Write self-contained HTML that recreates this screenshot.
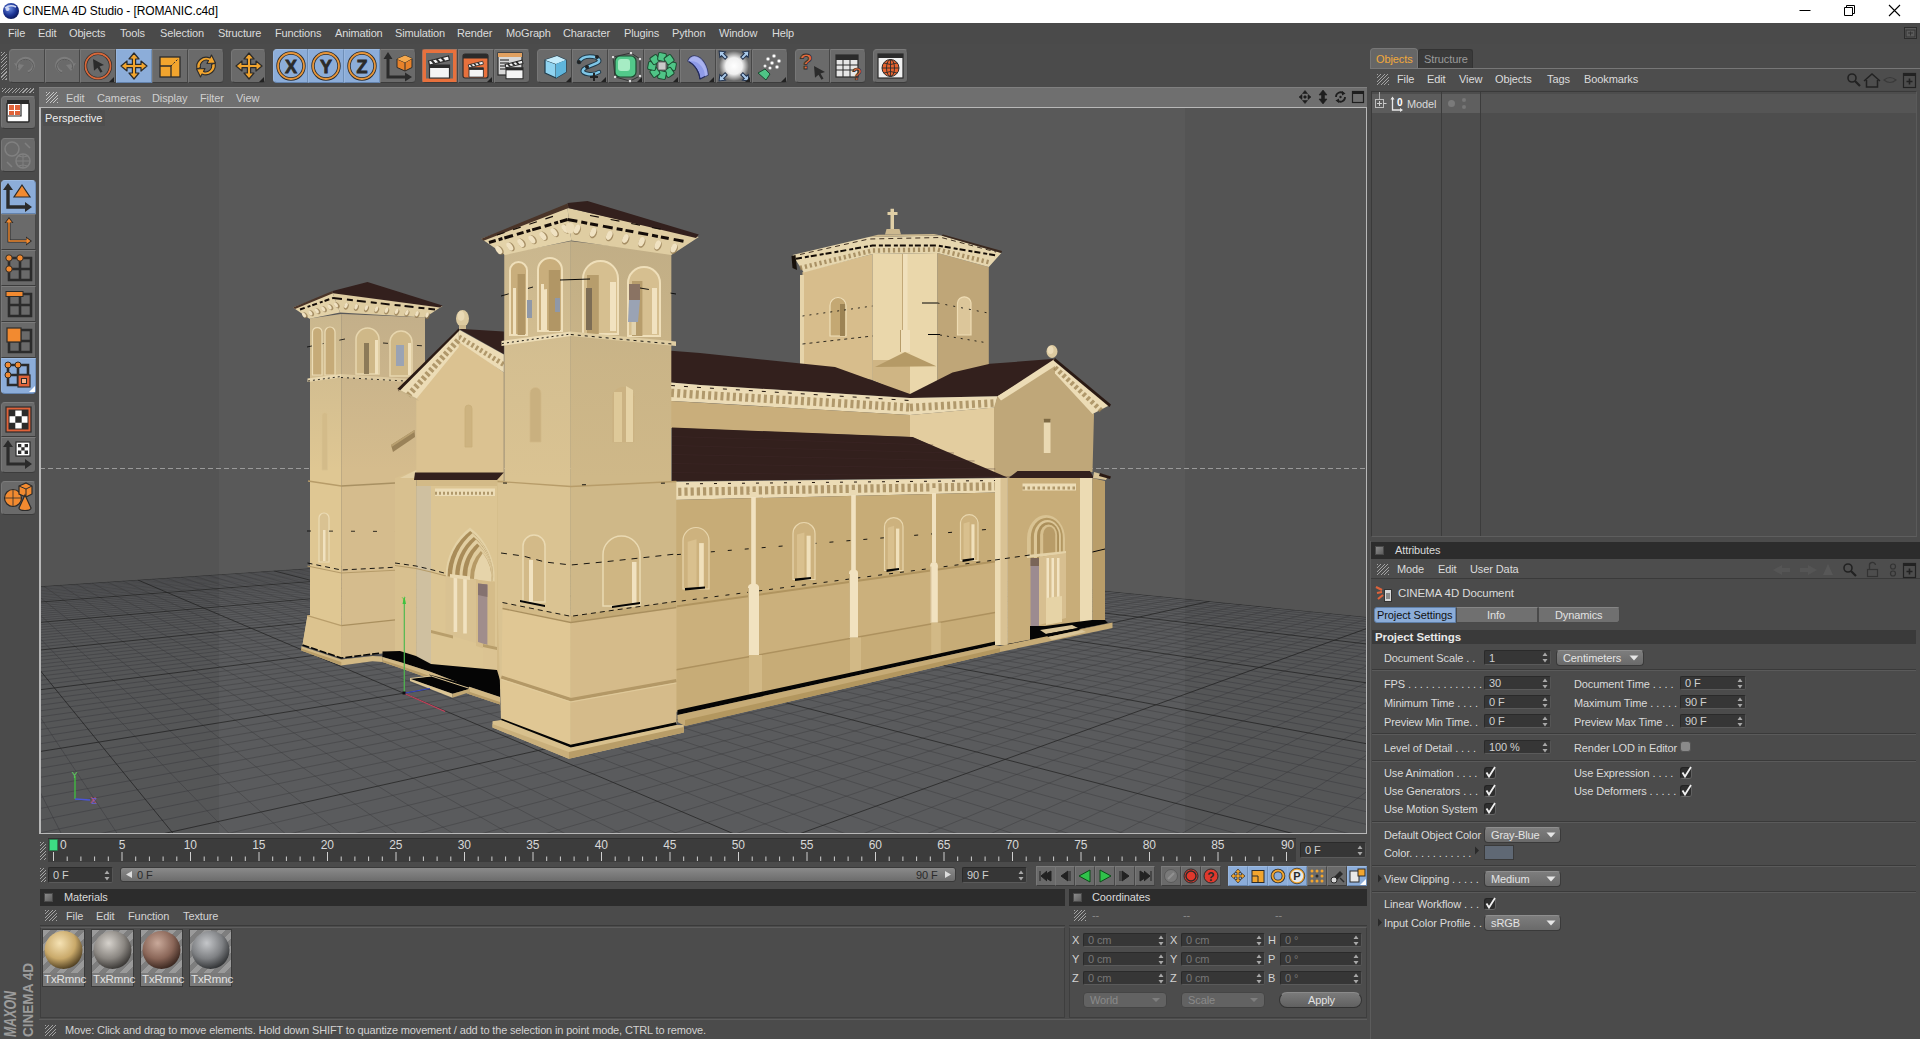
<!DOCTYPE html>
<html><head><meta charset="utf-8"><title>CINEMA 4D Studio - [ROMANIC.c4d]</title>
<style>
html,body{margin:0;padding:0;background:#4b4b4b;}
body{width:1920px;height:1039px;overflow:hidden;position:relative;font-family:"Liberation Sans",sans-serif;font-size:11px;color:#d2d2d2;}
div,span,svg{position:absolute;box-sizing:border-box;}
.t{white-space:nowrap;line-height:14px;font-size:11px;color:#d4d4d4;letter-spacing:-0.1px;}
.tm{white-space:nowrap;line-height:14px;font-size:11px;color:#dcdcdc;letter-spacing:-0.15px;}
.dk{color:#1c1c1c;}
.btn{background:#6a6a6a;border-top:1px solid #7c7c7c;border-left:1px solid #777;border-bottom:1px solid #3c3c3c;border-right:1px solid #474747;}
.btn.on{background:#8cadd9;border-color:#9dbbe2 #6f8fb8 #6483ad #98b6de;}
.fld{background:#363636;border:1px solid #2a2a2a;border-bottom-color:#5a5a5a;border-right-color:#555;border-radius:2px;}
.dd{background:linear-gradient(#7d7d7d,#6a6a6a);border:1px solid #3a3a3a;border-top-color:#8e8e8e;border-radius:4px;}
.hdr{background:#2c2c2c;}
.sep{background:#3a3a3a;border-bottom:1px solid #5a5a5a;height:2px;}
.grip{background-image:repeating-linear-gradient(135deg,#a4a4a4 0 0.9px,transparent 0.9px 2.5px);}
.chk{width:11px;height:11px;background:#2e2e2e;border:1px solid #242424;border-bottom-color:#666;border-right-color:#606060;border-radius:3px;}
</style></head>
<body>
<div style="left:1367px;top:44px;width:553px;height:995px;background:#4b4b4b;"></div>
<div style="left:1370px;top:48px;width:48px;height:21px;background:#666;border:1px solid #777;border-bottom:none;border-radius:4px 4px 0 0;"></div>
<span class="t" style="left:1376px;top:52px;color:#f2a93b;">Objects</span>
<div style="left:1418px;top:49px;width:55px;height:19px;background:#3a3a3a;border:1px solid #333;border-bottom:none;border-radius:3px 3px 0 0;"></div>
<span class="t" style="left:1424px;top:52px;color:#9a9a9a;">Structure</span>
<div style="left:1370px;top:68px;width:550px;height:1px;background:#777;"></div>
<div style="left:1370px;top:69px;width:550px;height:21px;background:#4d4d4d;"></div>
<div class="grip" style="left:1377px;top:74px;width:12px;height:11px;"></div>
<span class="t" style="left:1397px;top:72px;color:#dcdcdc;">File</span>
<span class="t" style="left:1427px;top:72px;color:#dcdcdc;">Edit</span>
<span class="t" style="left:1459px;top:72px;color:#dcdcdc;">View</span>
<span class="t" style="left:1495px;top:72px;color:#dcdcdc;">Objects</span>
<span class="t" style="left:1547px;top:72px;color:#dcdcdc;">Tags</span>
<span class="t" style="left:1584px;top:72px;color:#dcdcdc;">Bookmarks</span>
<svg style="left:1845px;top:71px" width="74" height="18" viewBox="0 0 74 18"><circle cx="7" cy="7" r="4" fill="none" stroke="#222" stroke-width="1.600"/><path d="M10 10l5 5" stroke="#222" stroke-width="2.200"/><path d="M19 10l8-7 8 7M21.500 9v7h11v-7" fill="none" stroke="#222" stroke-width="1.500"/><path d="M39 9q6-5 12 0q-6 5-12 0z" fill="none" stroke="#3a3a3a" stroke-width="1.200"/><rect x="58.500" y="2.500" width="12" height="14" fill="none" stroke="#222" stroke-width="1.200"/><path d="M58 4h13" stroke="#222" stroke-width="2"/><path d="M61.500 10.500h6M64.500 7.500v6" stroke="#222" stroke-width="1.600"/></svg>
<div style="left:1371px;top:91px;width:546px;height:446px;background:#4d4d4d;border:1px solid #3a3a3a;border-bottom-color:#5e5e5e;border-right-color:#5a5a5a;"></div>
<div style="left:1372px;top:94px;width:544px;height:19px;background:#555;"></div>
<div style="left:1372px;top:94px;width:70px;height:19px;background:#5c5c5c;"></div>
<div style="left:1442px;top:94px;width:39px;height:19px;background:#5f5f5f;"></div>
<div style="left:1441px;top:92px;width:1px;height:444px;background:#3c3c3c;"></div>
<div style="left:1480px;top:92px;width:1px;height:444px;background:#3c3c3c;"></div>
<svg style="left:1373px;top:92px" width="40" height="22" viewBox="0 0 40 22"><path d="M6.500 0v8" stroke="#aaa"/><rect x="2.500" y="7.500" width="8" height="8" fill="none" stroke="#bdbdbd"/><path d="M4 11.500h5M6.500 9v5M10.500 11.500h3" stroke="#cfcfcf"/><path d="M19.500 6v12h9" fill="none" stroke="#e8e8e8" stroke-width="1.300"/><path d="M19.500 4.500l-2 3h4zM30 18l-3-2v4z" fill="#e8e8e8"/></svg>
<span class="t" style="left:1397px;top:96px;color:#fff;font-size:10px;font-weight:bold;">0</span>
<span class="t" style="left:1407px;top:97px;color:#dadada;">Model</span>
<div style="left:1448px;top:100px;width:7px;height:7px;background:#7a7a7a;border-radius:50%;"></div>
<div style="left:1462px;top:98px;width:4px;height:4px;background:#777;border-radius:50%;"></div>
<div style="left:1462px;top:105px;width:4px;height:4px;background:#777;border-radius:50%;"></div>
<div style="left:1370px;top:541px;width:1px;height:498px;background:#5c5c5c;"></div>
<div class="hdr" style="left:1371px;top:542px;width:549px;height:17px;"></div>
<div style="left:1375px;top:546px;width:9px;height:9px;background:linear-gradient(135deg,#8a8a8a,#5e5e5e);border:1px solid #4a4a4a;"></div>
<span class="t" style="left:1395px;top:543px;color:#dadada;">Attributes</span>
<div style="left:1371px;top:559px;width:549px;height:20px;background:#4d4d4d;border-bottom:1px solid #3a3a3a;"></div>
<div class="grip" style="left:1377px;top:564px;width:12px;height:11px;"></div>
<span class="t" style="left:1397px;top:562px;color:#dcdcdc;">Mode</span>
<span class="t" style="left:1438px;top:562px;color:#dcdcdc;">Edit</span>
<span class="t" style="left:1470px;top:562px;color:#dcdcdc;">User Data</span>
<svg style="left:1770px;top:561px" width="150" height="18" viewBox="0 0 150 18"><path d="M3 9l9-5v3h8v4h-8v3zM47 9l-9-5v3h-8v4h8v3z" fill="#555"/><path d="M58 3l5 11h-10z" fill="#575757"/><circle cx="78" cy="7" r="4" fill="none" stroke="#222" stroke-width="1.600"/><path d="M81 10l5 5" stroke="#222" stroke-width="2.200"/><rect x="97.500" y="8.500" width="10" height="7" fill="none" stroke="#333" stroke-width="1.200"/><path d="M99.500 8v-3a3 3 0 0 1 6-1" fill="none" stroke="#333" stroke-width="1.300"/><circle cx="123" cy="5.500" r="2.500" fill="none" stroke="#333" stroke-width="1.200"/><circle cx="123" cy="12.500" r="2.500" fill="none" stroke="#333" stroke-width="1.200"/><rect x="133.500" y="2.500" width="12" height="14" fill="none" stroke="#222" stroke-width="1.200"/><path d="M133 4h13" stroke="#222" stroke-width="2"/><path d="M136.500 10.500h6M139.500 7.500v6" stroke="#222" stroke-width="1.600"/></svg>
<svg style="left:1374px;top:584px" width="20" height="20" viewBox="0 0 20 20"><path d="M2 3l6 3M3 9l5-1M4 15l5-4" stroke="#e0633a" stroke-width="2.200"/><rect x="10.500" y="5.500" width="7" height="12" fill="#d8d8d8" stroke="#333"/><rect x="12" y="9" width="4" height="6" fill="#8a8a8a"/></svg>
<span class="t" style="left:1398px;top:586px;color:#dcdcdc;font-size:11.5px;">CINEMA 4D Document</span>
<div style="left:1374px;top:607px;width:82px;height:16px;background:#8cadd9;border:1px solid #5f7fa8;border-radius:3px 0 0 3px;"></div>
<span class="t" style="left:1377px;top:608px;color:#111;">Project Settings</span>
<div style="left:1456px;top:607px;width:82px;height:16px;background:#707070;border:1px solid #4a4a4a;border-top-color:#858585;"></div>
<span class="t" style="left:1487px;top:608px;color:#e2e2e2;">Info</span>
<div style="left:1538px;top:607px;width:82px;height:16px;background:#707070;border:1px solid #4a4a4a;border-top-color:#858585;border-radius:0 3px 3px 0;"></div>
<span class="t" style="left:1555px;top:608px;color:#e2e2e2;">Dynamics</span>
<div style="left:1372px;top:630px;width:544px;height:14px;background:#3a3a3a;"></div>
<span class="t" style="left:1375px;top:630px;color:#e8e8e8;font-weight:bold;font-size:11.5px;">Project Settings</span>
<span class="t" style="left:1384px;top:650.5px;color:#dadada;">Document Scale . .</span>
<div class="fld" style="left:1484px;top:650px;width:67px;height:15px;"></div><span class="t" style="left:1489px;top:650.5px;color:#d0d0d0;">1</span><svg style="left:1542px;top:652.0px" width="6" height="11" viewBox="0 0 6 11"><path d="M3 0.500l2.500 3.500h-5zM3 10.500l2.500-3.500h-5z" fill="#a8a8a8"/></svg>
<div class="dd" style="left:1556px;top:649.5px;width:88px;height:16px;"></div><span class="t" style="left:1563px;top:650.5px;color:#e4e4e4;">Centimeters</span><svg style="left:1629px;top:654.5px" width="10" height="6"><path d="M0.500 0.500h9l-4.500 5z" fill="#e6e6e6"/></svg>
<div class="sep" style="left:1372px;top:669px;width:544px;height:2px;"></div>
<span class="t" style="left:1384px;top:676.5px;color:#dadada;">FPS . . . . . . . . . . . . .</span>
<div class="fld" style="left:1484px;top:676px;width:67px;height:14px;"></div><span class="t" style="left:1489px;top:676.0px;color:#d0d0d0;">30</span><svg style="left:1542px;top:677.5px" width="6" height="11" viewBox="0 0 6 11"><path d="M3 0.500l2.500 3.500h-5zM3 10.500l2.500-3.500h-5z" fill="#a8a8a8"/></svg>
<span class="t" style="left:1574px;top:676.5px;color:#dadada;">Document Time . . . .</span>
<div class="fld" style="left:1680px;top:676px;width:66px;height:14px;"></div><span class="t" style="left:1685px;top:676.0px;color:#d0d0d0;">0 F</span><svg style="left:1737px;top:677.5px" width="6" height="11" viewBox="0 0 6 11"><path d="M3 0.500l2.500 3.500h-5zM3 10.500l2.500-3.500h-5z" fill="#a8a8a8"/></svg>
<span class="t" style="left:1384px;top:695.5px;color:#dadada;">Minimum Time  . . . .</span>
<div class="fld" style="left:1484px;top:695px;width:67px;height:14px;"></div><span class="t" style="left:1489px;top:695.0px;color:#d0d0d0;">0 F</span><svg style="left:1542px;top:696.5px" width="6" height="11" viewBox="0 0 6 11"><path d="M3 0.500l2.500 3.500h-5zM3 10.500l2.500-3.500h-5z" fill="#a8a8a8"/></svg>
<span class="t" style="left:1574px;top:695.5px;color:#dadada;">Maximum Time . . . . .</span>
<div class="fld" style="left:1680px;top:695px;width:66px;height:14px;"></div><span class="t" style="left:1685px;top:695.0px;color:#d0d0d0;">90 F</span><svg style="left:1737px;top:696.5px" width="6" height="11" viewBox="0 0 6 11"><path d="M3 0.500l2.500 3.500h-5zM3 10.500l2.500-3.500h-5z" fill="#a8a8a8"/></svg>
<span class="t" style="left:1384px;top:714.5px;color:#dadada;">Preview Min Time. .</span>
<div class="fld" style="left:1484px;top:714px;width:67px;height:14px;"></div><span class="t" style="left:1489px;top:714.0px;color:#d0d0d0;">0 F</span><svg style="left:1542px;top:715.5px" width="6" height="11" viewBox="0 0 6 11"><path d="M3 0.500l2.500 3.500h-5zM3 10.500l2.500-3.500h-5z" fill="#a8a8a8"/></svg>
<span class="t" style="left:1574px;top:714.5px;color:#dadada;">Preview Max Time . .</span>
<div class="fld" style="left:1680px;top:714px;width:66px;height:14px;"></div><span class="t" style="left:1685px;top:714.0px;color:#d0d0d0;">90 F</span><svg style="left:1737px;top:715.5px" width="6" height="11" viewBox="0 0 6 11"><path d="M3 0.500l2.500 3.500h-5zM3 10.500l2.500-3.500h-5z" fill="#a8a8a8"/></svg>
<div class="sep" style="left:1372px;top:732.5px;width:544px;height:2px;"></div>
<span class="t" style="left:1384px;top:740.5px;color:#dadada;">Level of Detail  . . . .</span>
<div class="fld" style="left:1484px;top:740px;width:67px;height:14px;"></div><span class="t" style="left:1489px;top:740.0px;color:#d0d0d0;">100 %</span><svg style="left:1542px;top:741.5px" width="6" height="11" viewBox="0 0 6 11"><path d="M3 0.500l2.500 3.500h-5zM3 10.500l2.500-3.500h-5z" fill="#a8a8a8"/></svg>
<span class="t" style="left:1574px;top:740.5px;color:#dadada;">Render LOD in Editor</span>
<div style="left:1680px;top:741px;width:11px;height:11px;background:#8a8a8a;border:1px solid #555;border-radius:3px;"></div>
<div class="sep" style="left:1372px;top:759.5px;width:544px;height:2px;"></div>
<span class="t" style="left:1384px;top:766px;color:#dadada;">Use Animation  . . . .</span>
<div class="chk" style="left:1484px;top:767px;width:12px;height:12px;"></div><svg style="left:1484px;top:765px" width="14" height="14" viewBox="0 0 14 14"><path d="M2.500 7.500l2.500 4 6-9.500" fill="none" stroke="#f0f0f0" stroke-width="1.800"/></svg>
<span class="t" style="left:1574px;top:766px;color:#dadada;">Use Expression  . . . .</span>
<div class="chk" style="left:1680px;top:767px;width:12px;height:12px;"></div><svg style="left:1680px;top:765px" width="14" height="14" viewBox="0 0 14 14"><path d="M2.500 7.500l2.500 4 6-9.500" fill="none" stroke="#f0f0f0" stroke-width="1.800"/></svg>
<span class="t" style="left:1384px;top:784px;color:#dadada;">Use Generators  . . .</span>
<div class="chk" style="left:1484px;top:785px;width:12px;height:12px;"></div><svg style="left:1484px;top:783px" width="14" height="14" viewBox="0 0 14 14"><path d="M2.500 7.500l2.500 4 6-9.500" fill="none" stroke="#f0f0f0" stroke-width="1.800"/></svg>
<span class="t" style="left:1574px;top:784px;color:#dadada;">Use Deformers . . . . .</span>
<div class="chk" style="left:1680px;top:785px;width:12px;height:12px;"></div><svg style="left:1680px;top:783px" width="14" height="14" viewBox="0 0 14 14"><path d="M2.500 7.500l2.500 4 6-9.500" fill="none" stroke="#f0f0f0" stroke-width="1.800"/></svg>
<span class="t" style="left:1384px;top:802px;color:#dadada;">Use Motion System</span>
<div class="chk" style="left:1484px;top:803px;width:12px;height:12px;"></div><svg style="left:1484px;top:801px" width="14" height="14" viewBox="0 0 14 14"><path d="M2.500 7.500l2.500 4 6-9.500" fill="none" stroke="#f0f0f0" stroke-width="1.800"/></svg>
<div class="sep" style="left:1372px;top:820.5px;width:544px;height:2px;"></div>
<span class="t" style="left:1384px;top:827.5px;color:#dadada;">Default Object Color</span>
<div class="dd" style="left:1484px;top:826.5px;width:77px;height:16px;"></div><span class="t" style="left:1491px;top:827.5px;color:#e4e4e4;">Gray-Blue</span><svg style="left:1546px;top:831.5px" width="10" height="6"><path d="M0.500 0.500h9l-4.500 5z" fill="#e6e6e6"/></svg>
<span class="t" style="left:1384px;top:846px;color:#dadada;">Color. . . . . . . . . . .</span>
<svg style="left:1474px;top:846px" width="6" height="9"><path d="M1 0.500l4 4-4 4z" fill="#2a2a2a"/></svg>
<div style="left:1484px;top:845px;width:30px;height:15px;background:#5f6874;border:1px solid #3a3a3a;"></div>
<div class="sep" style="left:1372px;top:864.5px;width:544px;height:2px;"></div>
<svg style="left:1377px;top:874px" width="6" height="9"><path d="M1 0.500l4 4-4 4z" fill="#2a2a2a"/></svg>
<span class="t" style="left:1384px;top:872px;color:#dadada;">View Clipping . . . . .</span>
<div class="dd" style="left:1484px;top:870.5px;width:77px;height:16px;"></div><span class="t" style="left:1491px;top:871.5px;color:#e4e4e4;">Medium</span><svg style="left:1546px;top:875.5px" width="10" height="6"><path d="M0.500 0.500h9l-4.500 5z" fill="#e6e6e6"/></svg>
<div class="sep" style="left:1372px;top:890.5px;width:544px;height:2px;"></div>
<span class="t" style="left:1384px;top:897px;color:#dadada;">Linear Workflow . . .</span>
<div class="chk" style="left:1484px;top:897.5px;width:12px;height:12px;"></div><svg style="left:1484px;top:895.5px" width="14" height="14" viewBox="0 0 14 14"><path d="M2.500 7.500l2.500 4 6-9.500" fill="none" stroke="#f0f0f0" stroke-width="1.800"/></svg>
<svg style="left:1377px;top:918px" width="6" height="9"><path d="M1 0.500l4 4-4 4z" fill="#2a2a2a"/></svg>
<span class="t" style="left:1384px;top:916px;color:#dadada;">Input Color Profile . .</span>
<div class="dd" style="left:1484px;top:914.5px;width:77px;height:16px;"></div><span class="t" style="left:1491px;top:915.5px;color:#e4e4e4;">sRGB</span><svg style="left:1546px;top:919.5px" width="10" height="6"><path d="M0.500 0.500h9l-4.500 5z" fill="#e6e6e6"/></svg>
<div style="left:0px;top:0px;width:1920px;height:23px;background:#ffffff;"></div>
<svg style="left:2px;top:2px" width="18" height="18" viewBox="0 0 18 18"><defs><radialGradient id="gi" cx="0.4" cy="0.35" r="0.7"><stop offset="0" stop-color="#6f8fe0"/><stop offset="0.6" stop-color="#1d3596"/><stop offset="1" stop-color="#0a1450"/></radialGradient></defs>
    <circle cx="9" cy="9" r="8" fill="url(#gi)"/><path d="M3 6 Q8 2 14 5" stroke="#cfd8f5" stroke-width="1.6" fill="none"/><circle cx="5.5" cy="7" r="2" fill="#e8ecfa" opacity=".8"/></svg>
<span class="t" style="left:23px;top:4px;color:#000;font-size:12px;letter-spacing:-0.12px;">CINEMA 4D Studio - [ROMANIC.c4d]</span>
<svg style="left:1795px;top:2px" width="120" height="18" viewBox="0 0 120 18"><path d="M4.5 8.5H15.5" stroke="#000" stroke-width="1"/>
      <path d="M49.5 5.5h8v8h-8z M51.5 5.5v-2h8v8h-2" stroke="#000" fill="none" stroke-width="1"/>
      <path d="M94 3 L105 14 M105 3 L94 14" stroke="#000" stroke-width="1.1"/></svg>
<div style="left:0px;top:23px;width:1920px;height:21px;background:#4a4a4a;"></div>
<span class="tm" style="left:8px;top:26px;">File</span>
<span class="tm" style="left:38px;top:26px;">Edit</span>
<span class="tm" style="left:69px;top:26px;">Objects</span>
<span class="tm" style="left:120px;top:26px;">Tools</span>
<span class="tm" style="left:160px;top:26px;">Selection</span>
<span class="tm" style="left:218px;top:26px;">Structure</span>
<span class="tm" style="left:275px;top:26px;">Functions</span>
<span class="tm" style="left:335px;top:26px;">Animation</span>
<span class="tm" style="left:395px;top:26px;">Simulation</span>
<span class="tm" style="left:457px;top:26px;">Render</span>
<span class="tm" style="left:506px;top:26px;">MoGraph</span>
<span class="tm" style="left:563px;top:26px;">Character</span>
<span class="tm" style="left:624px;top:26px;">Plugins</span>
<span class="tm" style="left:672px;top:26px;">Python</span>
<span class="tm" style="left:719px;top:26px;">Window</span>
<span class="tm" style="left:772px;top:26px;">Help</span>
<svg style="left:1904px;top:27px" width="13" height="12" viewBox="0 0 13 12"><rect x="0.5" y="0.5" width="12" height="11" fill="#5a5a5a" stroke="#2c2c2c"/><rect x="2" y="3" width="9" height="7" fill="none" stroke="#333"/><path d="M4 6h5M6.5 4.5v4" stroke="#333"/></svg>
<div style="left:0px;top:44px;width:1366px;height:44px;background:#4b4b4b;"></div>
<div class="grip" style="left:1px;top:52px;width:6px;height:28px;"></div>
<div class="btn" style="left:9px;top:49px;width:35.5px;height:34px;border-radius:4px 0 0 4px;"></div>
<svg style="left:9px;top:49px" width="36" height="34" viewBox="0 0 36 34"><path d="M9 19a8 7 0 1 1 10 4" stroke="#7d7d7d" stroke-width="3" fill="none"/><path d="M5 14l5 8 5-6z" fill="#7d7d7d"/><path d="M9 20a8 7 0 1 1 10 4" stroke="#5b5b5b" stroke-width="1" fill="none"/></svg>
<div class="btn" style="left:44.5px;top:49px;width:35.5px;height:34px;"></div>
<svg style="left:44.5px;top:49px" width="36" height="34" viewBox="0 0 36 34"><path d="M27 19a8 7 0 1 0 -10 4" stroke="#7d7d7d" stroke-width="3" fill="none"/><path d="M31 14l-5 8 -5-6z" fill="#7d7d7d"/><path d="M27 20a8 7 0 1 0 -10 4" stroke="#5b5b5b" stroke-width="1" fill="none"/></svg>
<div class="btn" style="left:80.0px;top:49px;width:36px;height:34px;"></div>
<svg style="left:80.0px;top:49px" width="36" height="34" viewBox="0 0 36 34"><circle cx="18" cy="17" r="12.5" fill="none" stroke="#2b2b2b" stroke-width="3.2"/><circle cx="18" cy="17" r="12.5" fill="none" stroke="#d8683a" stroke-width="1.8"/><path d="M13 10l11 6-4.5 1.5 3 5-2 1.2-3-5-3.5 3z" fill="#2b2b2b"/><path d="M29 33h5v-5z" fill="#222"/></svg>
<div class="btn on" style="left:116.0px;top:49px;width:35.5px;height:34px;"></div>
<svg style="left:116.0px;top:49px" width="36" height="34" viewBox="0 0 36 34"><path d="M18 4l5 6h-3.4v5.4h5.4v-3.4l6 5-6 5v-3.4h-5.4v5.4h3.4l-5 6-5-6h3.400v-5.4h-5.400v3.4l-6-5 6-5v3.4h5.400v-5.400h-3.400z" fill="#f2a52e" stroke="#2b2b2b" stroke-width="1.2" stroke-linejoin="round"/></svg>
<div class="btn" style="left:151.5px;top:49px;width:36px;height:34px;"></div>
<svg style="left:151.5px;top:49px" width="36" height="34" viewBox="0 0 36 34"><rect x="8" y="8" width="20" height="20" fill="#f2a52e" stroke="#2b2b2b" stroke-width="1.3"/><path d="M8 17h11v11" fill="none" stroke="#2b2b2b" stroke-width="1.3"/><path d="M19 17l7-7" stroke="#2b2b2b" stroke-width="1" stroke-dasharray="2 1.5"/></svg>
<div class="btn" style="left:187.5px;top:49px;width:36px;height:34px;border-radius:0 4px 4px 0;"></div>
<svg style="left:187.5px;top:49px" width="36" height="34" viewBox="0 0 36 34"><path d="M9 20a9.500 9.500 0 0 1 13-11l1.500-3 4 8-8.500 0.500 1.500-3a6 6 0 0 0 -8 7z" fill="#f2a52e" stroke="#2b2b2b" stroke-width="1.1" stroke-linejoin="round"/><path d="M27 14a9.500 9.500 0 0 1 -13 11l-1.500 3-4-8 8.500-0.500-1.500 3a6 6 0 0 0 8-7z" fill="#f2a52e" stroke="#2b2b2b" stroke-width="1.1" stroke-linejoin="round"/></svg>
<div class="btn" style="left:231px;top:49px;width:35px;height:34px;border-radius:4px;"></div>
<svg style="left:231px;top:49px" width="36" height="34" viewBox="0 0 36 34"><path d="M18 4l5 6h-3.4v5.4h5.4v-3.4l6 5-6 5v-3.4h-5.4v5.4h3.4l-5 6-5-6h3.400v-5.4h-5.400v3.4l-6-5 6-5v3.4h5.400v-5.400h-3.400z" fill="#f2a52e" stroke="#2b2b2b" stroke-width="1.2" stroke-linejoin="round"/><path d="M28 33h5v-5z" fill="#222"/></svg>
<div class="btn on" style="left:273px;top:49px;width:35px;height:34px;border-radius:4px 0 0 4px;"></div>
<svg style="left:273px;top:49px" width="36" height="34" viewBox="0 0 36 34"><circle cx="18" cy="17" r="13" fill="none" stroke="#2b2b2b" stroke-width="3.4"/><circle cx="18" cy="17" r="13" fill="none" stroke="#e8963a" stroke-width="1.8"/><text x="18" y="23.500" text-anchor="middle" font-family="Liberation Sans,sans-serif" font-weight="bold" font-size="18" fill="#2b2b2b" stroke="#2b2b2b" stroke-width="0.8">X</text></svg>
<div class="btn on" style="left:308px;top:49px;width:35.5px;height:34px;"></div>
<svg style="left:308px;top:49px" width="36" height="34" viewBox="0 0 36 34"><circle cx="18" cy="17" r="13" fill="none" stroke="#2b2b2b" stroke-width="3.4"/><circle cx="18" cy="17" r="13" fill="none" stroke="#e8963a" stroke-width="1.8"/><text x="18" y="23.500" text-anchor="middle" font-family="Liberation Sans,sans-serif" font-weight="bold" font-size="18" fill="#2b2b2b" stroke="#2b2b2b" stroke-width="0.8">Y</text></svg>
<div class="btn on" style="left:343.5px;top:49px;width:36px;height:34px;"></div>
<svg style="left:343.5px;top:49px" width="36" height="34" viewBox="0 0 36 34"><circle cx="18" cy="17" r="13" fill="none" stroke="#2b2b2b" stroke-width="3.4"/><circle cx="18" cy="17" r="13" fill="none" stroke="#e8963a" stroke-width="1.8"/><text x="18" y="23.500" text-anchor="middle" font-family="Liberation Sans,sans-serif" font-weight="bold" font-size="18" fill="#2b2b2b" stroke="#2b2b2b" stroke-width="0.8">Z</text></svg>
<div class="btn" style="left:379.5px;top:49px;width:36px;height:34px;border-radius:0 4px 4px 0;"></div>
<svg style="left:379.5px;top:49px" width="36" height="34" viewBox="0 0 36 34"><path d="M8 7v21h20" fill="none" stroke="#2b2b2b" stroke-width="3"/><path d="M8 3l-4.500 7h9z M32 28l-7-4.500v9z" fill="#2b2b2b"/><path d="M17 10l8-3.500 7 3v9l-7 3.500-8-3.500z" fill="#e8822a" stroke="#2b2b2b" stroke-width="1"/><path d="M17 10l8 3.500 7-4M25 13.500v8.500" fill="none" stroke="#2b2b2b" stroke-width="1"/><path d="M17 10l8-3.500 7 3-7 4z" fill="#f6a94e"/></svg>
<div class="btn" style="left:422px;top:49px;width:36px;height:34px;border-radius:4px 0 0 4px;"></div>
<svg style="left:422px;top:49px" width="36" height="34" viewBox="0 0 36 34"><rect x="0.5" y="0.5" width="34" height="32.5" fill="#e8713d"/><rect x="4" y="4" width="27" height="25.5" fill="#6a6a6a"/><g transform="translate(7.5 8) scale(1.0)"><path d="M0 8h20v13h-20z" fill="#f4f4f4" stroke="#2b2b2b" stroke-width="1.200"/><path d="M-1 4l20-5 1 4-20 5z" fill="#f4f4f4" stroke="#2b2b2b" stroke-width="1.200"/><path d="M2 3.300l3 3.200M7 2l3 3.200M12 .8l3 3.200" stroke="#2b2b2b" stroke-width="2"/><path d="M0 8h20v3h-20z" fill="#2b2b2b"/></g></svg>
<div class="btn" style="left:458px;top:49px;width:36px;height:34px;"></div>
<svg style="left:458px;top:49px" width="36" height="34" viewBox="0 0 36 34"><rect x="5" y="5" width="25" height="24" rx="2" fill="#e8713d" stroke="#2b2b2b" stroke-width="1.2"/><path d="M5 7a2 2 0 0 1 2-2h21a2 2 0 0 1 2 2v2.500h-25z" fill="#2b2b2b"/><g transform="translate(11 13) scale(0.72)"><path d="M0 8h20v13h-20z" fill="#f4f4f4" stroke="#2b2b2b" stroke-width="1.200"/><path d="M-1 4l20-5 1 4-20 5z" fill="#f4f4f4" stroke="#2b2b2b" stroke-width="1.200"/><path d="M2 3.300l3 3.200M7 2l3 3.200M12 .8l3 3.200" stroke="#2b2b2b" stroke-width="2"/><path d="M0 8h20v3h-20z" fill="#2b2b2b"/></g><path d="M29 33h5v-5z" fill="#222"/></svg>
<div class="btn" style="left:494px;top:49px;width:35.5px;height:34px;border-radius:0 4px 4px 0;"></div>
<svg style="left:494px;top:49px" width="36" height="34" viewBox="0 0 36 34"><rect x="4" y="4" width="24" height="22" fill="#d8d8d8" stroke="#2b2b2b" stroke-width="1.2"/><rect x="4" y="4" width="24" height="4" fill="#e0a060"/><path d="M6 11h9M6 14h9M6 17h9M6 20h9" stroke="#555" stroke-width="1.400"/><g transform="translate(12 12) scale(0.85)"><path d="M0 8h20v13h-20z" fill="#f4f4f4" stroke="#2b2b2b" stroke-width="1.200"/><path d="M-1 4l20-5 1 4-20 5z" fill="#f4f4f4" stroke="#2b2b2b" stroke-width="1.200"/><path d="M2 3.300l3 3.200M7 2l3 3.200M12 .8l3 3.200" stroke="#2b2b2b" stroke-width="2"/><path d="M0 8h20v3h-20z" fill="#2b2b2b"/></g></svg>
<div class="btn" style="left:537px;top:49px;width:34.5px;height:34px;border-radius:4px 0 0 4px;"></div>
<svg style="left:537px;top:49px" width="36" height="34" viewBox="0 0 36 34"><path d="M8 11l12-4 9 4v12l-10 6-11-5z" fill="#8fd3f0" stroke="#1f3a4a" stroke-width="1.2" stroke-linejoin="round"/><path d="M8 11l11 4 10-4M19 15v14" fill="none" stroke="#1f3a4a" stroke-width="1"/><path d="M8 11l12-4 9 4-10 4z" fill="#c4ecfb"/><path d="M19 15l10-4v12l-10 6z" fill="#5fb5dc"/><path d="M29 33h5v-5z" fill="#222"/></svg>
<div class="btn" style="left:571.5px;top:49px;width:36px;height:34px;"></div>
<svg style="left:571.5px;top:49px" width="36" height="34" viewBox="0 0 36 34"><path d="M7 13c4-8 18-6 20-2s-14 6-16 10 10 6 16 2" fill="none" stroke="#1f3a4a" stroke-width="4.500" stroke-linecap="round"/><path d="M7 13c4-8 18-6 20-2s-14 6-16 10 10 6 16 2" fill="none" stroke="#7fc6e6" stroke-width="2.500" stroke-linecap="round"/><circle cx="7" cy="13" r="2" fill="#222"/><circle cx="25" cy="8" r="2" fill="#222"/><circle cx="15" cy="18" r="2" fill="#222"/><path d="M18 28h8M22 24v8" stroke="#222" stroke-width="2"/><path d="M29 33h5v-5z" fill="#222"/></svg>
<div class="btn" style="left:607.5px;top:49px;width:36px;height:34px;"></div>
<svg style="left:607.5px;top:49px" width="36" height="34" viewBox="0 0 36 34"><rect x="7" y="7" width="21" height="21" rx="5" fill="#52c98a" stroke="#1c4a30" stroke-width="1.2"/><rect x="10" y="10" width="12" height="12" rx="3" fill="#a6ecc4"/><path d="M5 8l18-4 9 6v17l-10 5-15-4z" fill="none" stroke="#333" stroke-width="1"/><g fill="#fff" stroke="#333" stroke-width=".5"><circle cx="5" cy="8" r="1.500"/><circle cx="23" cy="4" r="1.500"/><circle cx="32" cy="10" r="1.500"/><circle cx="32" cy="27" r="1.500"/><circle cx="22" cy="32" r="1.500"/><circle cx="7" cy="28" r="1.500"/></g><path d="M29 33h5v-5z" fill="#222"/></svg>
<div class="btn" style="left:643.5px;top:49px;width:36px;height:34px;"></div>
<svg style="left:643.5px;top:49px" width="36" height="34" viewBox="0 0 36 34"><rect x="24.0" y="13.0" width="8" height="8" rx="1.5" fill="#4fc486" stroke="#1c4a30" stroke-width="1" transform="rotate(10 28.0 17.0)"/><rect x="21.1" y="19.4" width="8" height="8" rx="1.5" fill="#4fc486" stroke="#1c4a30" stroke-width="1" transform="rotate(55 25.1 23.4)"/><rect x="14.0" y="22.0" width="8" height="8" rx="1.5" fill="#4fc486" stroke="#1c4a30" stroke-width="1" transform="rotate(100 18.0 26.0)"/><rect x="6.9" y="19.4" width="8" height="8" rx="1.5" fill="#4fc486" stroke="#1c4a30" stroke-width="1" transform="rotate(145 10.9 23.4)"/><rect x="4.0" y="13.0" width="8" height="8" rx="1.5" fill="#4fc486" stroke="#1c4a30" stroke-width="1" transform="rotate(190 8.0 17.0)"/><rect x="6.9" y="6.6" width="8" height="8" rx="1.5" fill="#4fc486" stroke="#1c4a30" stroke-width="1" transform="rotate(235 10.9 10.6)"/><rect x="14.0" y="4.0" width="8" height="8" rx="1.5" fill="#4fc486" stroke="#1c4a30" stroke-width="1" transform="rotate(280 18.0 8.0)"/><rect x="21.1" y="6.6" width="8" height="8" rx="1.5" fill="#4fc486" stroke="#1c4a30" stroke-width="1" transform="rotate(325 25.1 10.6)"/><rect x="14" y="13" width="8" height="8" fill="#c9c9c9" stroke="#555" stroke-width=".8"/><path d="M29 33h5v-5z" fill="#222"/></svg>
<div class="btn" style="left:679.5px;top:49px;width:36px;height:34px;"></div>
<svg style="left:679.5px;top:49px" width="36" height="34" viewBox="0 0 36 34"><path d="M8 12c2-6 8-6 12-3s8 10 8 17l-8 4c-1-8-5-14-12-18z" fill="#8f9be8" stroke="#232a5c" stroke-width="1.200" stroke-linejoin="round"/><path d="M8 12c7 4 11 10 12 18" fill="none" stroke="#232a5c" stroke-width="1"/><path d="M8 12c2-6 8-6 12-3s8 10 8 17l-3 1.500c0-8-6-17-17-15z" fill="#b4bcf4" opacity=".7"/><path d="M29 33h5v-5z" fill="#222"/></svg>
<div class="btn" style="left:715.5px;top:49px;width:36px;height:34px;"></div>
<svg style="left:715.5px;top:49px" width="36" height="34" viewBox="0 0 36 34"><defs><radialGradient id="gl"><stop offset="0" stop-color="#fff"/><stop offset=".55" stop-color="#fff" stop-opacity=".9"/><stop offset="1" stop-color="#fff" stop-opacity="0"/></radialGradient></defs><circle cx="18" cy="17" r="15" fill="url(#gl)"/><path d="M0 -5.500l4 5h-2.500v5h-3v-5h-2.500z" transform="translate(7 6) rotate(-45)" fill="#a9c8e8" stroke="#1f2f4a" stroke-width="1"/><path d="M0 -5.500l4 5h-2.500v5h-3v-5h-2.500z" transform="translate(29 6) rotate(45)" fill="#a9c8e8" stroke="#1f2f4a" stroke-width="1"/><path d="M0 -5.500l4 5h-2.500v5h-3v-5h-2.500z" transform="translate(29 28) rotate(135)" fill="#a9c8e8" stroke="#1f2f4a" stroke-width="1"/><path d="M0 -5.500l4 5h-2.500v5h-3v-5h-2.500z" transform="translate(7 28) rotate(225)" fill="#a9c8e8" stroke="#1f2f4a" stroke-width="1"/><path d="M29 33h5v-5z" fill="#222"/></svg>
<div class="btn" style="left:751.5px;top:49px;width:36px;height:34px;border-radius:0 4px 4px 0;"></div>
<svg style="left:751.5px;top:49px" width="36" height="34" viewBox="0 0 36 34"><path d="M6 24l7-4 5 5-4 6z" fill="#4fc486" stroke="#1c4a30" stroke-width="1"/><g fill="#fff" stroke="#888" stroke-width=".4"><circle cx="16" cy="10" r="1.8"/><circle cx="22" cy="7" r="1.8"/><circle cx="27" cy="12" r="1.8"/><circle cx="20" cy="14" r="1.8"/><circle cx="25" cy="18" r="1.8"/><circle cx="18" cy="19" r="1.600"/><circle cx="13" cy="17" r="1.500"/></g><path d="M29 33h5v-5z" fill="#222"/></svg>
<div class="btn" style="left:795px;top:49px;width:34.5px;height:34px;border-radius:4px 0 0 4px;"></div>
<svg style="left:795px;top:49px" width="36" height="34" viewBox="0 0 36 34"><text x="11" y="20" text-anchor="middle" font-family="Liberation Sans,sans-serif" font-weight="bold" font-size="22" fill="#e56a3a" stroke="#2b2b2b" stroke-width=".8">?</text><path d="M19 17l11 6-4.500 1.500 3 5-2 1.200-3-5-3.500 3z" fill="#2b2b2b"/></svg>
<div class="btn" style="left:829.5px;top:49px;width:36px;height:34px;border-radius:0 4px 4px 0;"></div>
<svg style="left:829.5px;top:49px" width="36" height="34" viewBox="0 0 36 34"><rect x="6" y="6" width="22" height="22" fill="#e6e6e6" stroke="#2b2b2b" stroke-width="1.200"/><rect x="6" y="6" width="22" height="5" fill="#2b2b2b"/><path d="M6 16h22M6 21h22M13 11v17M20 11v17" stroke="#2b2b2b" stroke-width="1"/><text x="27" y="31" text-anchor="middle" font-family="Liberation Sans,sans-serif" font-weight="bold" font-size="16" fill="#e56a3a" stroke="#2b2b2b" stroke-width=".7">?</text></svg>
<div class="btn" style="left:873px;top:49px;width:35px;height:34px;border-radius:4px;"></div>
<svg style="left:873px;top:49px" width="36" height="34" viewBox="0 0 36 34"><rect x="5" y="5" width="25" height="24" fill="#f0f0f0" stroke="#2b2b2b" stroke-width="1.200"/><rect x="5" y="5" width="25" height="4" fill="#2b2b2b"/><circle cx="17.500" cy="19" r="8.500" fill="#e8632f" stroke="#2b2b2b" stroke-width="1"/><path d="M9 19h17M17.500 10.500v17M11 14q6.500 3 13 0M11 24q6.500-3 13 0" fill="none" stroke="#2b2b2b" stroke-width=".9"/><ellipse cx="17.500" cy="19" rx="4" ry="8.500" fill="none" stroke="#2b2b2b" stroke-width=".9"/></svg>
<div style="left:0px;top:88px;width:39px;height:951px;background:#4b4b4b;"></div>
<div class="grip" style="left:2px;top:88px;width:32px;height:5px;"></div>
<div class="btn" style="left:1px;top:96px;width:35px;height:33px;border-radius:4px;"></div>
<svg style="left:1px;top:96px" width="34" height="34" viewBox="0 0 34 34"><rect x="6" y="7" width="22" height="19" rx="1" fill="#fff" stroke="#2b2b2b" stroke-width="1.500"/><rect x="6" y="4" width="22" height="4" fill="#2b2b2b"/><rect x="8" y="9" width="5" height="5" fill="#e0633a"/><rect x="14" y="9" width="5" height="5" fill="#e0633a"/><rect x="8" y="15" width="5" height="4" fill="#e0633a"/><rect x="14" y="15" width="5" height="4" fill="#e0633a"/><path d="M20 8v12H7" fill="none" stroke="#2b2b2b" stroke-width="1.200"/></svg>
<div class="btn" style="left:1px;top:138px;width:35px;height:34px;border-radius:4px;"></div>
<svg style="left:1px;top:138px" width="34" height="34" viewBox="0 0 34 34"><circle cx="11" cy="11" r="7" fill="none" stroke="#808080" stroke-width="1.500"/><circle cx="22" cy="23" r="7" fill="none" stroke="#808080" stroke-width="1.500"/><path d="M15 23h14M22 16v14M17 18q5 2 10 0M17 28q5-2 10 0" stroke="#808080" fill="none"/><path d="M24 5l5 5M6 24l5 5" stroke="#808080" stroke-width="1.500"/></svg>
<div class="btn on" style="left:1px;top:179.5px;width:35px;height:34.5px;border-radius:4px 4px 0 0;"></div>
<svg style="left:1px;top:180px" width="34" height="34" viewBox="0 0 34 34"><path d="M7 8v19h19" fill="none" stroke="#2b2b2b" stroke-width="3.400"/><path d="M7 3l-5 7h10zM31 27l-7-5v10z" fill="#2b2b2b"/><path d="M21 5l8 12h-16z" fill="#f28a30" stroke="#2b2b2b" stroke-width="1.200"/></svg>
<div class="btn" style="left:1px;top:214px;width:35px;height:36px;"></div>
<svg style="left:1px;top:214px" width="34" height="34" viewBox="0 0 34 34"><path d="M8 8v19h18" fill="none" stroke="#2b2b2b" stroke-width="3"/><path d="M8 3l-4.500 6h9zM31 27l-6-4.500v9z" fill="#2b2b2b"/><path d="M8 8v19h18" fill="none" stroke="#f28a30" stroke-width="1.400"/><path d="M8 4.500l-3 4h6zM29.500 27l-4-3v6z" fill="#f28a30"/></svg>
<div class="btn" style="left:1px;top:250px;width:35px;height:36px;"></div>
<svg style="left:1px;top:250px" width="34" height="34" viewBox="0 0 34 34"><path d="M8 8h22v22h-22z M19 8v22 M8 19h22" fill="none" stroke="#2b2b2b" stroke-width="2.6"/><circle cx="8" cy="8" r="3.200" fill="#f28a30" stroke="#2b2b2b"/><circle cx="19" cy="8" r="3.200" fill="#f28a30" stroke="#2b2b2b"/><circle cx="8" cy="19" r="3.200" fill="#f28a30" stroke="#2b2b2b"/></svg>
<div class="btn" style="left:1px;top:286px;width:35px;height:36px;"></div>
<svg style="left:1px;top:286px" width="34" height="34" viewBox="0 0 34 34"><path d="M8 8h22v22h-22z M19 8v22 M8 19h22" fill="none" stroke="#2b2b2b" stroke-width="2.6"/><rect x="5" y="5.500" width="17" height="5" fill="#f28a30" stroke="#2b2b2b"/></svg>
<div class="btn" style="left:1px;top:322px;width:35px;height:36px;"></div>
<svg style="left:1px;top:322px" width="34" height="34" viewBox="0 0 34 34"><path d="M8 8h22v22h-22z M19 8v22 M8 19h22" fill="none" stroke="#2b2b2b" stroke-width="2.6"/><rect x="6" y="6" width="14" height="14" fill="#f28a30" stroke="#2b2b2b" stroke-width="1.200"/></svg>
<div class="btn on" style="left:1px;top:358px;width:35px;height:36px;border-radius:0 0 4px 4px;"></div>
<svg style="left:1px;top:358px" width="34" height="34" viewBox="0 0 34 34"><path d="M7 7h20v20h-20z M17 7v20 M7 17h20" fill="none" stroke="#2b2b2b" stroke-width="2.6"/><circle cx="7" cy="7" r="3" fill="#f28a30" stroke="#2b2b2b"/><circle cx="17" cy="7" r="3" fill="#f28a30" stroke="#2b2b2b"/><circle cx="7" cy="17" r="3" fill="#f28a30" stroke="#2b2b2b"/><rect x="17" y="17" width="12" height="12" fill="#e0633a" stroke="#2b2b2b" stroke-width="1.200"/><rect x="20.500" y="20.500" width="5" height="5" fill="#f6b38a" stroke="#2b2b2b"/><path d="M28 34h6v-6z" fill="#fff"/></svg>
<div class="btn" style="left:1px;top:402px;width:35px;height:35px;border-radius:4px 4px 0 0;"></div>
<svg style="left:1px;top:402px" width="34" height="34" viewBox="0 0 34 34"><rect x="5" y="5" width="25" height="25" fill="#e0633a" stroke="#2b2b2b" stroke-width="1.200"/><rect x="8" y="8" width="19" height="19" fill="#fff" stroke="#2b2b2b"/><path d="M8 8h6.300v6.300h-6.300zM20.700 8h6.300v6.300h-6.300zM14.300 14.300h6.400v6.400h-6.400zM8 20.700h6.300v6.300h-6.300zM20.700 20.700h6.300v6.300h-6.300z" fill="#2b2b2b"/></svg>
<div class="btn" style="left:1px;top:437px;width:35px;height:35.5px;border-radius:0 0 4px 4px;"></div>
<svg style="left:1px;top:437px" width="34" height="34" viewBox="0 0 34 34"><path d="M7 8v19h19" fill="none" stroke="#2b2b2b" stroke-width="3.200"/><path d="M7 3l-5 7h10zM31 27l-7-5v10z" fill="#2b2b2b"/><rect x="15" y="5" width="14" height="14" fill="#fff" stroke="#2b2b2b" stroke-width="1.200"/><path d="M17 7h3.300v3.300h-3.300zM23.600 7h3.400v3.300h-3.400zM20.300 10.300h3.300v3.300h-3.300zM17 13.600h3.300v3.400h-3.300zM23.600 13.600h3.400v3.400h-3.400z" fill="#2b2b2b"/></svg>
<div class="btn" style="left:1px;top:480.5px;width:35px;height:34.5px;border-radius:4px;"></div>
<svg style="left:1px;top:480px" width="34" height="34" viewBox="0 0 34 34"><circle cx="12" cy="18" r="8.500" fill="#f28a30" stroke="#2b2b2b" stroke-width="1.200"/><path d="M3.500 18h17M12 9.500v17" stroke="#2b2b2b" stroke-width=".8" fill="none"/><path d="M18 6l7-3 6 3v8l-6 3-7-3z" fill="#f28a30" stroke="#2b2b2b" stroke-width="1.200"/><path d="M18 6l7 3 6-3M25 9v8" stroke="#2b2b2b" fill="none"/><path d="M24 15l6 13a6 2.500 0 0 1-12 0z" fill="#f28a30" stroke="#2b2b2b" stroke-width="1.200"/></svg>
<svg style="left:0;top:955px" width="38" height="84" viewBox="0 0 38 84"><g transform="translate(19 82) rotate(-90)" font-family="Liberation Sans,sans-serif" font-weight="bold" fill="#9c9c9c"><text x="0" y="-3" font-size="17" font-style="italic" textLength="46" lengthAdjust="spacingAndGlyphs">MAXON</text><text x="0" y="14" font-size="14.500" textLength="74" lengthAdjust="spacingAndGlyphs">CINEMA 4D</text></g></svg>
<div style="left:39px;top:87px;width:1328px;height:21px;background:#6f6f6f;border-top:1px solid #808080;"></div>
<div style="left:46px;top:92px;width:12px;height:11px;background-image:repeating-linear-gradient(135deg,#c8c8c8 0 0.9px,transparent 0.9px 2.5px);"></div>
<span class="t" style="left:66px;top:91px;color:#cfcfcf;">Edit</span>
<span class="t" style="left:97px;top:91px;color:#cfcfcf;">Cameras</span>
<span class="t" style="left:152px;top:91px;color:#cfcfcf;">Display</span>
<span class="t" style="left:200px;top:91px;color:#cfcfcf;">Filter</span>
<span class="t" style="left:236px;top:91px;color:#cfcfcf;">View</span>
<svg style="left:1298px;top:89px" width="68" height="16" viewBox="0 0 68 16"><g fill="#1e1e1e" stroke="#1e1e1e" stroke-width=".6"><path d="M7 1.500l2.500 3h-5zM7 14.500l2.500-3h-5zM1 8l3-2.500v5zM13 8l-3-2.500v5z"/><circle cx="7" cy="8" r="1.300"/><path d="M25 1l4 5h-2.500v4h2.500l-4 5-4-5h2.500v-4h-2.500z"/></g><path d="M38 8a4.500 4.500 0 0 1 7.500-3.500M47 8a4.500 4.500 0 0 1-7.500 3.500" fill="none" stroke="#1e1e1e" stroke-width="1.800"/><path d="M44 2l3.500 2.500-3.500 2zM41 14l-3.500-2.500 3.500-2z" fill="#1e1e1e"/><circle cx="42.500" cy="8" r="1.200" fill="#1e1e1e"/><rect x="54.500" y="2.500" width="11" height="11" fill="none" stroke="#1e1e1e" stroke-width="1.200"/><path d="M54.500 4h11" stroke="#1e1e1e" stroke-width="2"/></svg>
<div style="left:39px;top:107px;width:1328px;height:727px;background:#b8b8b8;"></div>
<svg style="left:41px;top:108px" width="1325" height="725" viewBox="41 108 1325 725">
<defs><linearGradient id="gtop" gradientUnits="userSpaceOnUse" x1="0" y1="241" x2="0" y2="480"><stop offset="0" stop-color="#8f8a80" stop-opacity=".22"/><stop offset=".5" stop-color="#8f8a80" stop-opacity=".08"/><stop offset="1" stop-color="#8f8a80" stop-opacity="0"/></linearGradient><linearGradient id="gtop2" gradientUnits="userSpaceOnUse" x1="0" y1="314" x2="0" y2="470"><stop offset="0" stop-color="#8f8a80" stop-opacity=".26"/><stop offset="1" stop-color="#8f8a80" stop-opacity="0"/></linearGradient></defs>
<rect x="40" y="107" width="1327" height="727" fill="#595959"/>
<clipPath id="fclip"><polygon points="40.0,586.4 651.0,545.6 1366.0,617.0 1366.0,833.0 40.0,833.0"/></clipPath>
<polygon points="40.0,586.4 651.0,545.6 1366.0,617.0 1366.0,833.0 40.0,833.0" fill="#5a5b5d" />
<g clip-path="url(#fclip)">
<path d="M1781.0 658.5L1549.3 2182.5 M1748.9 655.3L1260.4 2153.6 M1717.9 652.2L981.0 2125.7 M1687.9 649.2L710.7 2098.7 M1658.8 646.3L449.1 2072.5 M1603.4 640.7L-49.7 2022.7 M1576.9 638.1L-287.7 1998.9 M1551.3 635.5L-518.5 1975.8 M1526.4 633.0L-742.4 1953.4 M1502.2 630.6L-959.8 1931.7 M1478.8 628.3L-1171.0 1910.6 M1456.0 626.0L-1376.1 1890.1 M1433.8 623.8L-1575.5 1870.2 M1412.3 621.6L-1769.3 1850.8 M1371.0 617.5L-2141.4 1813.6 M1351.1 615.5L-2320.1 1795.8 M1331.8 613.6L-2494.0 1778.4 M1312.9 611.7L-2663.5 1761.4 M1294.6 609.9L-2828.6 1744.9 M1276.7 608.1L-2989.6 1728.8 M1259.3 606.4L-3146.6 1713.2 M1242.3 604.6L-3299.7 1697.8 M1225.7 603.0L-3449.1 1682.9 M1193.6 599.8L-3737.2 1654.1 M1178.2 598.2L-3876.3 1640.2 M1163.1 596.7L-4012.1 1626.7 M1148.4 595.3L-4144.8 1613.4 M1134.0 593.8L-165463.8 31600.8 M1119.9 592.4L-43635.2 8660.8 M1106.1 591.0L-25176.3 5185.1 M1092.6 589.7L-17714.2 3780.0 M1079.4 588.4L-13677.4 3019.9 M1053.9 585.8L-9413.7 2217.0 M1041.5 584.6L-8151.2 1979.3 M1029.4 583.4L-7190.8 1798.5 M1017.6 582.2L-6435.6 1656.3 M1006.0 581.0L-5826.3 1541.5 M994.6 579.9L-5324.3 1447.0 M983.4 578.8L-4903.6 1367.8 M972.5 577.7L-4545.8 1300.4 M961.8 576.6L-4237.9 1242.4 M940.9 574.5L-3735.0 1147.8 M930.8 573.5L-3527.0 1108.6 M920.9 572.5L-3341.7 1073.7 M911.2 571.6L-3175.5 1042.4 M901.6 570.6L-3025.7 1014.2 M892.2 569.7L-2889.9 988.6 M883.0 568.7L-2766.2 965.3 M873.9 567.8L-2653.1 944.0 M865.1 567.0L-2549.3 924.5 M847.7 565.2L-2365.4 889.9 M839.3 564.4L-2283.5 874.4 M831.0 563.5L-2207.4 860.1 M822.9 562.7L-2136.4 846.7 M814.9 561.9L-2070.2 834.3 M807.0 561.1L-2008.1 822.6 M799.3 560.4L-1949.9 811.6 M791.6 559.6L-1895.2 801.3 M784.1 558.9L-1843.7 791.6 M769.5 557.4L-1749.2 773.8 M762.4 556.7L-1705.7 765.6 M755.4 556.0L-1664.5 757.9 M748.5 555.3L-1625.4 750.5 M741.7 554.6L-1588.2 743.5 M735.0 553.9L-1552.8 736.8 M728.4 553.3L-1519.1 730.5 M721.9 552.6L-1486.9 724.4 M715.5 552.0L-1456.2 718.7 M703.0 550.7L-1398.8 707.9 M696.8 550.1L-1371.9 702.8 M690.8 549.5L-1346.1 697.9 M684.9 548.9L-1321.4 693.3 M679.0 548.4L-1297.6 688.8 M673.3 547.8L-1274.8 684.5 M667.6 547.2L-1252.8 680.4 M662.0 546.7L-1231.7 676.4 M656.4 546.1L-1211.3 672.6 M-118.6 597.0L-67.0 1629.4 M-99.1 595.7L108.5 1617.7 M-79.9 594.5L280.5 1606.2 M-61.2 593.2L449.1 1594.9 M-42.8 592.0L614.4 1583.8 M-7.2 589.6L935.3 1562.4 M10.1 588.4L1091.3 1551.9 M27.1 587.3L1244.2 1541.7 M43.8 586.2L1394.3 1531.6 M60.2 585.1L1541.6 1521.8 M76.3 584.0L1686.3 1512.1 M92.0 583.0L1828.2 1502.6 M107.5 581.9L1967.7 1493.3 M122.7 580.9L2104.6 1484.1 M152.4 578.9L2371.2 1466.3 M166.8 578.0L2501.1 1457.6 M181.0 577.0L2628.7 1449.1 M194.9 576.1L2754.1 1440.7 M208.6 575.2L2877.4 1432.4 M222.1 574.3L2998.6 1424.3 M235.3 573.4L3117.8 1416.3 M248.3 572.5L3235.0 1408.5 M261.1 571.6L3350.3 1400.8 M286.2 570.0L3575.4 1385.7 M298.4 569.2L3685.2 1378.4 M310.4 568.3L3793.2 1371.1 M322.2 567.6L3899.6 1364.0 M333.8 566.8L4004.3 1357.0 M345.3 566.0L4107.4 1350.1 M356.5 565.3L4208.8 1343.3 M367.6 564.5L4308.8 1336.6 M378.6 563.8L4407.2 1330.0 M400.0 562.4L4599.6 1317.2 M410.4 561.7L4693.7 1310.9 M420.7 561.0L4786.4 1304.7 M430.9 560.3L4877.7 1298.6 M440.9 559.6L4967.7 1292.5 M450.7 559.0L5056.4 1286.6 M460.4 558.3L5143.9 1280.7 M470.0 557.7L5230.1 1275.0 M479.5 557.0L5315.1 1269.3 M497.9 555.8L5481.5 1258.2 M507.0 555.2L5563.0 1252.7 M515.9 554.6L5643.4 1247.3 M524.7 554.0L5722.7 1242.0 M533.4 553.4L5800.9 1236.8 M542.0 552.8L5878.0 1231.6 M550.5 552.3L5954.2 1226.5 M558.8 551.7L6029.3 1221.5 M567.0 551.2L6103.4 1216.5 M583.2 550.1L6248.8 1206.8 M591.1 549.6L6320.1 1202.0 M598.9 549.0L6390.4 1197.3 M606.7 548.5L6459.9 1192.7 M614.3 548.0L6528.5 1188.1 M621.8 547.5L6596.2 1183.6 M629.2 547.0L6663.1 1179.1 M636.6 546.5L6729.2 1174.7 M643.8 546.0L6794.4 1170.3" stroke="#3c3d3f" stroke-width="0.9" fill="none" opacity="0.52"/>
<path d="M1630.6 643.5L195.7 2047.2 M1391.3 619.6L-1957.9 1832.0 M1209.5 601.4L-3594.9 1668.3 M1066.5 587.1L-11147.6 2543.5 M951.3 575.6L-3970.1 1192.0 M856.3 566.1L-2453.7 906.5 M776.8 558.1L-1795.1 782.5 M709.2 551.4L-1426.9 713.1 M651.0 545.6L-1191.7 668.9 M-24.8 590.8L776.4 1573.0 M137.7 579.9L2239.1 1475.1 M273.8 570.8L3463.8 1393.2 M389.3 563.1L4504.1 1323.6 M488.8 556.4L5398.9 1263.7 M575.2 550.6L6176.6 1211.6 M651.0 545.6L6858.8 1166.0" stroke="#262626" stroke-width="0.95" fill="none" opacity="0.85"/>
</g>
<rect x="40" y="107" width="179" height="727" fill="#000" opacity="0.055"/>
<rect x="1185" y="107" width="182" height="727" fill="#000" opacity="0.055"/>
<line x1="40" y1="468.500" x2="1366" y2="468.500" stroke="#9a9a9a" stroke-width="1" stroke-dasharray="5 3"/>
<polygon points="802.5,272.0 872.5,254.0 872.5,380.0 802.5,366.0" fill="#d7bd8c" />
<polygon points="872.5,254.0 937.5,253.0 937.5,382.0 910.0,396.0 872.5,380.0" fill="#ead7ab" />
<polygon points="872.5,360.0 910.0,360.0 910.0,396.0 872.5,380.0" fill="#cfb584" />
<polygon points="937.5,253.0 988.8,267.0 988.8,366.0 937.5,382.0" fill="#bfa678" />
<polygon points="875.0,367.0 905.0,352.0 936.3,366.3" fill="#b59a66" />
<polygon points="902.5,254.0 907.5,254.0 907.5,330.0 902.5,330.0" fill="#f0e0bc" />
<line x1="902.5" y1="254.0" x2="902.5" y2="330.0" stroke="#c2a878" stroke-width="1" />
<polygon points="900.0,330.0 910.0,330.0 910.0,352.0 900.0,352.0" fill="#f0e0bc" />
<line x1="900.5" y1="330.0" x2="900.5" y2="352.0" stroke="#b79c6a" stroke-width="1" />
<polygon points="800.0,275.0 804.0,275.0 804.0,364.0 800.0,364.0" fill="#e6d4aa" />
<path d="M830.0 336.0V305.5A8.0 8.0 0 0 1 846.0 305.5V336.0Z" fill="#c4a873" stroke="#efdfba" stroke-width="1.2"/>
<polygon points="840.0,304.0 845.0,304.0 845.0,336.0 840.0,336.0" fill="#9c8354" />
<path d="M957.5 335.0V302.8A6.8 6.8 0 0 1 971.0 302.8V335.0Z" fill="#dcc69a" stroke="#eedcb4" stroke-width="1.2"/>
<line x1="802.5" y1="316.0" x2="872.5" y2="306.0" stroke="#050505" stroke-width="0.8" stroke-dasharray="2 5"/>
<line x1="802.5" y1="344.0" x2="872.5" y2="336.0" stroke="#050505" stroke-width="0.8" stroke-dasharray="3 4"/>
<line x1="922.0" y1="303.0" x2="937.5" y2="303.0" stroke="#050505" stroke-width="1" />
<line x1="928.0" y1="334.5" x2="940.0" y2="334.5" stroke="#050505" stroke-width="1" />
<line x1="937.5" y1="303.0" x2="988.0" y2="313.0" stroke="#050505" stroke-width="0.8" stroke-dasharray="2 6"/>
<line x1="940.0" y1="335.0" x2="988.0" y2="343.0" stroke="#050505" stroke-width="0.8" stroke-dasharray="2 5"/>
<polygon points="792.5,255.0 868.8,237.0 941.3,235.6 1001.3,253.0 988.8,267.0 937.5,253.0 872.5,254.0 803.8,272.5" fill="#e6d6ae" />
<polyline points="800.0,268.0 872.5,250.5 937.5,249.5 990.0,262.5" fill="none" stroke="#9a8052" stroke-width="4.5" stroke-dasharray="2.2 2.8" opacity=".8"/>
<polyline points="796.0,258.8 872.5,245.6 937.5,245.6 997.5,255.6" fill="none" stroke="#120b06" stroke-width="2" stroke-dasharray="6 3 4 2"/>
<polyline points="800.0,254.5 868.8,239.0 941.3,237.5 996.0,252.0" fill="none" stroke="#2a1c12" stroke-width="0.9" stroke-dasharray="5 4"/>
<polygon points="791.5,256.0 795.5,255.0 797.0,270.0 792.5,268.0" fill="#17100a" />
<polygon points="868.8,237.0 941.3,235.6 934.0,234.0 878.0,234.8" fill="#cdb98f" />
<polygon points="941.3,235.6 1001.3,253.0 1002.0,251.0 943.0,234.5" fill="#3a281e" />
<polygon points="890.5,208.8 894.0,208.8 894.0,212.0 897.5,212.0 897.5,215.0 894.0,215.0 894.0,229.5 890.5,229.5 890.5,215.0 887.5,215.0 887.5,212.0 890.5,212.0" fill="#e0cfa6" />
<polygon points="886.5,229.0 899.5,229.0 901.0,234.5 885.0,234.5" fill="#cdb98f" />
<polygon points="671.0,350.8 700.0,353.0 835.0,367.0 910.0,394.0 910.0,398.0 700.0,385.0 671.0,382.5" fill="#33201d" />
<polygon points="671.0,382.5 700.0,385.0 910.0,398.0 910.0,415.0 700.0,402.5 671.0,401.0" fill="#ecdcb6" />
<polyline points="671.0,392.8 700.0,394.8 910.0,407.5" fill="none" stroke="#9c8152" stroke-width="8.325000000000001" stroke-dasharray="3 3.2" opacity="0.75"/>
<polyline points="671.0,385.5 700.0,387.5 910.0,400.5" fill="none" stroke="#20140c" stroke-width="1" stroke-dasharray="4 9"/>
<polygon points="671.0,401.0 910.0,415.0 910.0,437.0 671.0,428.0" fill="#c9ae7b" />
<polygon points="910.0,394.0 952.5,372.5 990.0,363.8 1055.0,358.8 1057.0,362.0 997.5,396.3 910.0,398.0" fill="#33201d" />
<polygon points="910.0,398.0 997.5,396.3 995.0,407.5 910.0,415.0" fill="#ecdcb6" />
<polyline points="910.0,407.5 996.2,402.9" fill="none" stroke="#9c8152" stroke-width="7.65" stroke-dasharray="3 3.2" opacity="0.75"/>
<polygon points="910.0,415.0 994.0,407.5 994.0,474.0 912.5,437.0 910.0,437.0" fill="#e3cd9f" />
<polygon points="994.0,407.5 997.5,396.3 1055.0,361.0 1094.0,414.0 1092.5,472.0 1017.5,472.0 1007.5,478.0 994.0,474.0" fill="#bfa779" />
<polygon points="997.5,396.3 1055.0,358.8 1055.0,366.0 1001.0,400.5" fill="#ecdcb6" />
<polygon points="1055.0,359.5 1110.0,405.0 1092.5,414.0 1055.0,373.5" fill="#ecdcb6" />
<polyline points="1055.0,367.5 1101.2,410.5" fill="none" stroke="#9c8152" stroke-width="5" stroke-dasharray="3 2.5" opacity="0.75"/>
<polygon points="1055.0,358.0 1111.0,404.5 1109.5,407.0 1053.5,360.5" fill="#2a1a14" />
<ellipse cx="1052" cy="351.5" rx="5.5" ry="6.5" fill="#dccaa0"/><ellipse cx="1050.5" cy="350" rx="3" ry="4" fill="#ecdcb8"/>
<polygon points="1043.8,420.0 1050.5,420.0 1050.5,453.0 1043.8,453.0" fill="#ead9b2" />
<polygon points="1043.8,418.8 1050.5,418.8 1050.5,422.5 1043.8,422.5" fill="#7e6a44" />
<polygon points="672.0,427.5 912.5,437.0 1007.5,477.5 672.0,481.3" fill="#33201d" />
<line x1="672.0" y1="436.5" x2="933.2" y2="445.0" stroke="#40282a" stroke-width="0.6" opacity="0.7"/>
<line x1="672.0" y1="445.5" x2="953.9" y2="453.0" stroke="#40282a" stroke-width="0.6" opacity="0.7"/>
<line x1="672.0" y1="454.5" x2="974.6" y2="461.0" stroke="#40282a" stroke-width="0.6" opacity="0.7"/>
<line x1="672.0" y1="463.5" x2="995.3" y2="469.0" stroke="#40282a" stroke-width="0.6" opacity="0.7"/>
<line x1="672.0" y1="472.5" x2="1016.0" y2="477.0" stroke="#40282a" stroke-width="0.6" opacity="0.7"/>
<polygon points="672.0,481.8 1007.0,478.0 995.0,492.5 672.0,500.0" fill="#ecdcb6" />
<polyline points="672.0,491.9 1001.0,486.2" fill="none" stroke="#9c8152" stroke-width="8.189999999999996" stroke-dasharray="3.2 3" opacity="0.75"/>
<polyline points="672.0,484.0 1000.0,480.5" fill="none" stroke="#20140c" stroke-width="1" stroke-dasharray="3 11"/>
<polygon points="672.0,500.0 995.0,492.5 995.0,643.0 677.5,711.5 672.0,713.0" fill="#c7ac77" />
<polygon points="672.0,606.0 995.0,561.0 995.0,613.0 672.0,671.0" fill="#cbb07c" />
<line x1="672.0" y1="670.5" x2="995.0" y2="612.5" stroke="#ad915e" stroke-width="1.5" />
<line x1="672.0" y1="607.0" x2="995.0" y2="561.5" stroke="#b0945f" stroke-width="2" />
<line x1="660.0" y1="556.0" x2="995.0" y2="528.8" stroke="#050505" stroke-width="0.9" stroke-dasharray="4 13"/>
<line x1="660.0" y1="603.8" x2="995.0" y2="560.0" stroke="#050505" stroke-width="0.9" stroke-dasharray="4 7"/>
<path d="M683.0 589.0V540.5A13.0 13.0 0 0 1 709.0 540.5V589.0Z" fill="#cdb27e" stroke="#e8d6ad" stroke-width="1.2"/>
<polygon points="687.7,541.8 696.5,539.2 696.5,588.0 687.7,588.0" fill="#d9c08e" />
<polygon points="699.1,543.1 703.8,543.1 703.8,588.0 699.1,588.0" fill="#f0e0bb" />
<polygon points="685.0,588.0 705.0,586.5 705.0,588.5 685.0,590.5" fill="#050505" />
<path d="M793.0 579.5V533.5A11.0 11.0 0 0 1 815.0 533.5V579.5Z" fill="#cdb27e" stroke="#e8d6ad" stroke-width="1.2"/>
<polygon points="797.0,534.6 804.4,532.4 804.4,578.5 797.0,578.5" fill="#d9c08e" />
<polygon points="806.6,535.7 810.6,535.7 810.6,578.5 806.6,578.5" fill="#f0e0bb" />
<polygon points="795.0,578.5 811.0,577.0 811.0,579.0 795.0,581.0" fill="#050505" />
<path d="M884.5 570.5V526.8A9.2 9.2 0 0 1 903.0 526.8V570.5Z" fill="#cdb27e" stroke="#e8d6ad" stroke-width="1.2"/>
<polygon points="887.8,527.7 894.1,525.8 894.1,569.5 887.8,569.5" fill="#d9c08e" />
<polygon points="896.0,528.6 899.3,528.6 899.3,569.5 896.0,569.5" fill="#f0e0bb" />
<polygon points="886.5,569.5 899.0,568.0 899.0,570.0 886.5,572.0" fill="#050505" />
<path d="M960.5 560.5V522.5A8.8 8.8 0 0 1 978.0 522.5V560.5Z" fill="#cdb27e" stroke="#e8d6ad" stroke-width="1.2"/>
<polygon points="963.6,523.4 969.6,521.7 969.6,559.5 963.6,559.5" fill="#d9c08e" />
<polygon points="971.4,524.3 974.5,524.3 974.5,559.5 971.4,559.5" fill="#f0e0bb" />
<polygon points="962.5,559.5 974.0,558.0 974.0,560.0 962.5,562.0" fill="#050505" />
<polygon points="749.0,655.0 762.0,655.0 762.0,694.0 749.0,694.0" fill="#d2b986" />
<polygon points="751.2,495.0 755.8,495.0 755.8,584.0 751.2,584.0" fill="#f1e2c0" />
<polygon points="748.0,587.0 759.0,587.0 759.0,655.0 748.0,655.0" fill="#f1e2c0" />
<ellipse cx="753.5" cy="587" rx="5.5" ry="3.5" fill="#f1e2c0"/>
<line x1="748.5" y1="588.0" x2="748.5" y2="655.0" stroke="#cbb383" stroke-width="1" />
<polygon points="749.2,492.0 757.8,492.0 755.8,497.0 751.2,497.0" fill="#eadab4" />
<polygon points="850.0,637.5 861.0,637.5 861.0,672.0 850.0,672.0" fill="#d2b986" />
<polygon points="851.2,493.0 855.8,493.0 855.8,570.0 851.2,570.0" fill="#f1e2c0" />
<polygon points="849.0,573.0 858.0,573.0 858.0,637.5 849.0,637.5" fill="#f1e2c0" />
<ellipse cx="853.5" cy="573" rx="4.5" ry="3.5" fill="#f1e2c0"/>
<line x1="849.5" y1="574.0" x2="849.5" y2="637.5" stroke="#cbb383" stroke-width="1" />
<polygon points="849.2,490.0 857.8,490.0 855.8,495.0 851.2,495.0" fill="#eadab4" />
<polygon points="931.2,622.5 940.8,622.5 940.8,655.0 931.2,655.0" fill="#d2b986" />
<polygon points="932.0,491.0 936.0,491.0 936.0,562.5 932.0,562.5" fill="#f1e2c0" />
<polygon points="930.2,565.5 937.8,565.5 937.8,622.5 930.2,622.5" fill="#f1e2c0" />
<ellipse cx="934" cy="565.5" rx="3.75" ry="3.5" fill="#f1e2c0"/>
<line x1="930.8" y1="566.5" x2="930.8" y2="622.5" stroke="#cbb383" stroke-width="1" />
<polygon points="930.0,488.0 938.0,488.0 936.0,493.0 932.0,493.0" fill="#eadab4" />
<polygon points="677.5,710.0 995.0,641.5 995.0,645.0 677.5,715.0" fill="#050505" />
<polygon points="677.5,715.0 995.0,645.0 1000.0,646.0 1000.0,652.0 685.0,726.0 677.5,722.0" fill="#c6ab76" />
<polygon points="685.0,720.0 1000.0,648.0 1000.0,652.0 685.0,726.0" fill="#b3975f" />
<polygon points="1007.5,477.5 1080.0,477.5 1080.0,630.0 1007.5,644.0" fill="#c8ad79" />
<polygon points="995.0,478.0 1007.5,478.0 1007.5,645.0 995.0,645.0" fill="#ecdbb3" />
<polygon points="1000.5,478.0 1007.5,478.0 1007.5,645.0 1000.5,645.0" fill="#d9c294" />
<polygon points="1080.0,478.0 1092.5,478.0 1092.5,626.0 1080.0,629.0" fill="#ecdbb3" />
<polygon points="1092.5,478.0 1105.0,481.0 1105.0,621.0 1092.5,626.0" fill="#b99d69" />
<polygon points="1017.5,471.0 1090.0,471.0 1094.0,478.0 1009.0,478.0" fill="#33201d" />
<polygon points="1094.0,472.0 1108.0,476.0 1106.0,480.0 1093.0,478.0" fill="#d8c497" />
<polygon points="1100.0,473.0 1111.0,476.5 1110.0,479.0 1099.0,476.0" fill="#2a1a14" />
<polygon points="1022.5,483.5 1076.0,483.5 1076.0,490.5 1022.5,490.5" fill="#ecdcb6" />
<polyline points="1022.5,488.0 1076.0,488.0" fill="none" stroke="#9c8152" stroke-width="3" stroke-dasharray="2.5 2.5" opacity="0.75"/>
<path d="M1027 556 V538.8 A19 23.8 0 0 1 1065 538.8 V556 Z" fill="#d9c393" transform="translate(0.0 0.0)"/>
<path d="M1030 556 V535.0 A16 20.0 0 0 1 1062 535.0 V556 Z" fill="#b39761" transform="translate(0.8 2.7)"/>
<path d="M1032.5 556 V531.9 A13.5 16.9 0 0 1 1059.5 531.9 V556 Z" fill="#dcc798" transform="translate(1.4 5.0)"/>
<path d="M1035 556 V528.8 A11 13.8 0 0 1 1057 528.8 V556 Z" fill="#ab8f5a" transform="translate(2.0 7.2)"/>
<path d="M1037.5 556 V525.6 A8.5 10.6 0 0 1 1054.5 525.6 V556 Z" fill="#d6bf8e" transform="translate(2.6 9.5)"/>
<path d="M1040 556 V522.5 A6 7.5 0 0 1 1052 522.5 V556 Z" fill="#b89c68" transform="translate(3.2 11.7)"/>
<polygon points="1027.0,555.0 1066.0,551.0 1066.0,554.0 1027.0,558.0" fill="#e4d2a8" />
<polygon points="1030.5,560.0 1039.0,560.0 1039.0,626.0 1030.5,628.0" fill="#9c8b90" />
<polygon points="1030.5,558.0 1039.0,558.0 1039.0,566.0 1030.5,566.0" fill="#7a6558" />
<polygon points="1039.0,557.0 1066.0,553.0 1066.0,618.0 1039.0,625.0" fill="#d7bf90" />
<polygon points="1046.5,558.0 1049.0,558.0 1049.0,598.0 1046.5,598.0" fill="#f2e4c3" />
<polygon points="1051.5,558.0 1054.0,558.0 1054.0,598.0 1051.5,598.0" fill="#f2e4c3" />
<polygon points="1057.0,558.0 1059.5,558.0 1059.5,598.0 1057.0,598.0" fill="#f2e4c3" />
<polygon points="1046.0,598.0 1062.0,596.0 1062.0,622.0 1046.0,625.0" fill="#e6d3a6" />
<line x1="1092.5" y1="552.0" x2="1105.0" y2="549.0" stroke="#050505" stroke-width="1" />
<line x1="995.0" y1="560.0" x2="1030.0" y2="555.0" stroke="#050505" stroke-width="0.9" stroke-dasharray="5 5"/>
<polygon points="1007.5,644.0 1030.0,640.0 1030.0,626.0 1045.0,626.0 1092.0,620.0 1105.0,620.0 1108.0,623.0 1066.0,632.0 1010.0,648.0" fill="#050505" />
<polygon points="1000.0,646.0 1112.5,622.5 1112.5,628.0 1000.0,652.0" fill="#c6ab76" />
<polygon points="1040.0,630.0 1072.0,625.0 1078.0,628.0 1046.0,634.0" fill="#d9c59a" />
<polygon points="1046.0,634.0 1078.0,628.0 1080.0,630.0 1048.0,637.0" fill="#050505" />
<polygon points="1048.0,637.0 1082.0,630.0 1086.0,632.0 1052.0,640.0" fill="#d9c59a" />
<polygon points="341.3,314.0 425.0,317.5 425.0,480.0 400.0,480.0 400.0,651.5 341.3,658.0" fill="#d5bc8d" />
<polygon points="310.0,318.5 341.3,314.0 341.3,658.0 302.5,645.0 307.5,615.6 310.0,615.0" fill="#dfc793" />
<polygon points="307.5,615.6 341.3,625.6 341.3,658.0 302.5,645.0" fill="#dcc38f" />
<polygon points="310.0,318.5 341.3,314.0 425.0,317.5 425.0,470.0 310.0,470.0" fill="url(#gtop2)" />
<line x1="307.5" y1="615.6" x2="341.3" y2="625.6" stroke="#b99e6b" stroke-width="1.3" />
<polygon points="341.3,625.6 400.0,619.4 400.0,651.5 381.0,653.0 341.3,658.0" fill="#d2b98a" />
<line x1="341.3" y1="625.6" x2="400.0" y2="619.4" stroke="#a98f5e" stroke-width="1.3" />
<line x1="308.0" y1="481.0" x2="341.3" y2="486.0" stroke="#b79c69" stroke-width="1.5" />
<line x1="341.3" y1="486.0" x2="395.0" y2="483.0" stroke="#a89062" stroke-width="1.5" />
<polygon points="307.5,378.5 341.3,374.0 341.3,377.5 307.5,382.0" fill="#e9d8b0" />
<polygon points="341.3,374.0 418.0,379.5 418.0,383.0 341.3,377.5" fill="#dcc9a0" />
<line x1="308.0" y1="381.0" x2="341.0" y2="376.5" stroke="#050505" stroke-width="0.8" stroke-dasharray="2 3"/>
<line x1="341.0" y1="377.5" x2="405.0" y2="381.0" stroke="#050505" stroke-width="0.8" stroke-dasharray="2 4"/>
<line x1="307.0" y1="347.0" x2="345.0" y2="339.0" stroke="#050505" stroke-width="0.8" stroke-dasharray="6 5"/>
<line x1="383.0" y1="343.0" x2="425.0" y2="346.0" stroke="#050505" stroke-width="0.8" stroke-dasharray="5 12"/>
<path d="M312.5 375.0V331.8A4.8 4.8 0 0 1 322.0 331.8V375.0Z" fill="#c6ab78" stroke="#ecdcb6" stroke-width="1.2"/>
<path d="M325.0 375.0V332.0A5.0 5.0 0 0 1 335.0 332.0V375.0Z" fill="#c6ab78" stroke="#ecdcb6" stroke-width="1.2"/>
<path d="M356.0 374.0V339.5A11.5 11.5 0 0 1 379.0 339.5V374.0Z" fill="#cfb888" stroke="#e7d6ae" stroke-width="1.5"/>
<polygon points="364.0,343.0 369.0,343.0 369.0,374.0 364.0,374.0" fill="#8c7a58" />
<polygon points="375.0,340.0 378.0,340.0 378.0,374.0 375.0,374.0" fill="#efe0bd" />
<path d="M390.0 376.0V342.0A11.0 11.0 0 0 1 412.0 342.0V376.0Z" fill="#cfb888" stroke="#e7d6ae" stroke-width="1.5"/>
<polygon points="396.0,345.0 404.0,345.0 404.0,366.0 396.0,366.0" fill="#9aa3b4" />
<polygon points="408.0,343.0 411.0,343.0 411.0,375.0 408.0,375.0" fill="#efe0bd" />
<path d="M322.0 470.0V414.8A2.8 2.8 0 0 1 327.5 414.8V470.0Z" fill="#d3bb89" stroke="#d8c190" stroke-width="0.8"/>
<path d="M319.0 562.0V518.0A5.0 5.0 0 0 1 329.0 518.0V562.0Z" fill="#d9c292" stroke="#ecdcb6" stroke-width="1.2"/>
<polygon points="323.0,530.0 325.5,530.0 325.5,561.0 323.0,561.0" fill="#f1e2c0" />
<line x1="307.0" y1="531.0" x2="400.0" y2="531.5" stroke="#050505" stroke-width="0.8" stroke-dasharray="4 18"/>
<polyline points="307.5,563.0 341.3,570.0 400.0,567.0" fill="none" stroke="#050505" stroke-width="0.9" stroke-dasharray="5 4"/>
<polyline points="307.5,566.0 341.3,573.0 400.0,570.0" fill="none" stroke="#b59b69" stroke-width="1.2" />
<polygon points="293.0,307.5 332.5,292.5 340.0,312.5 309.4,318.8" fill="#e3d2a8" />
<polygon points="332.5,292.5 442.5,306.0 425.0,317.5 340.0,312.5" fill="#dfcda2" />
<polygon points="332.5,291.0 367.5,282.0 442.5,305.5 440.0,307.5 333.0,293.2" fill="#33201d" />
<polygon points="293.0,307.5 332.5,291.0 333.0,293.2 295.0,309.0" fill="#4a3428" />
<line x1="300.0" y1="309.5" x2="333.0" y2="298.0" stroke="#140c08" stroke-width="2" stroke-dasharray="5 3 3 2" stroke-linecap="butt"/>
<line x1="333.0" y1="298.0" x2="435.0" y2="309.5" stroke="#140c08" stroke-width="2" stroke-dasharray="9 5 6 4" stroke-linecap="butt"/>
<ellipse cx="304.7" cy="315.8" rx="2.2" ry="3.3" fill="#8d744a" opacity=".7" transform="rotate(-35 304.0 315.0)"/>
<ellipse cx="304.0" cy="315.0" rx="1.6" ry="2.8" fill="#f0e2c2" transform="rotate(-35 304.0 315.0)"/>
<ellipse cx="311.1" cy="313.8" rx="2.2" ry="3.3" fill="#8d744a" opacity=".7" transform="rotate(-35 310.4 313.0)"/>
<ellipse cx="310.4" cy="313.0" rx="1.6" ry="2.8" fill="#f0e2c2" transform="rotate(-35 310.4 313.0)"/>
<ellipse cx="317.5" cy="311.8" rx="2.2" ry="3.3" fill="#8d744a" opacity=".7" transform="rotate(-35 316.8 311.0)"/>
<ellipse cx="316.8" cy="311.0" rx="1.6" ry="2.8" fill="#f0e2c2" transform="rotate(-35 316.8 311.0)"/>
<ellipse cx="323.9" cy="309.8" rx="2.2" ry="3.3" fill="#8d744a" opacity=".7" transform="rotate(-35 323.2 309.0)"/>
<ellipse cx="323.2" cy="309.0" rx="1.6" ry="2.8" fill="#f0e2c2" transform="rotate(-35 323.2 309.0)"/>
<ellipse cx="330.3" cy="307.8" rx="2.2" ry="3.3" fill="#8d744a" opacity=".7" transform="rotate(-35 329.6 307.0)"/>
<ellipse cx="329.6" cy="307.0" rx="1.6" ry="2.8" fill="#f0e2c2" transform="rotate(-35 329.6 307.0)"/>
<ellipse cx="336.7" cy="305.8" rx="2.2" ry="3.3" fill="#8d744a" opacity=".7" transform="rotate(-35 336.0 305.0)"/>
<ellipse cx="336.0" cy="305.0" rx="1.6" ry="2.8" fill="#f0e2c2" transform="rotate(-35 336.0 305.0)"/>
<ellipse cx="346.7" cy="306.3" rx="2.2" ry="3.3" fill="#8d744a" opacity=".7" transform="rotate(25 346.0 305.5)"/>
<ellipse cx="346.0" cy="305.5" rx="1.6" ry="2.8" fill="#f0e2c2" transform="rotate(25 346.0 305.5)"/>
<ellipse cx="356.8" cy="307.5" rx="2.2" ry="3.3" fill="#8d744a" opacity=".7" transform="rotate(25 356.1 306.7)"/>
<ellipse cx="356.1" cy="306.7" rx="1.6" ry="2.8" fill="#f0e2c2" transform="rotate(25 356.1 306.7)"/>
<ellipse cx="366.9" cy="308.7" rx="2.2" ry="3.3" fill="#8d744a" opacity=".7" transform="rotate(25 366.2 307.9)"/>
<ellipse cx="366.2" cy="307.9" rx="1.6" ry="2.8" fill="#f0e2c2" transform="rotate(25 366.2 307.9)"/>
<ellipse cx="377.1" cy="309.9" rx="2.2" ry="3.3" fill="#8d744a" opacity=".7" transform="rotate(25 376.4 309.1)"/>
<ellipse cx="376.4" cy="309.1" rx="1.6" ry="2.8" fill="#f0e2c2" transform="rotate(25 376.4 309.1)"/>
<ellipse cx="387.2" cy="311.1" rx="2.2" ry="3.3" fill="#8d744a" opacity=".7" transform="rotate(25 386.5 310.2)"/>
<ellipse cx="386.5" cy="310.2" rx="1.6" ry="2.8" fill="#f0e2c2" transform="rotate(25 386.5 310.2)"/>
<ellipse cx="397.3" cy="312.2" rx="2.2" ry="3.3" fill="#8d744a" opacity=".7" transform="rotate(25 396.6 311.4)"/>
<ellipse cx="396.6" cy="311.4" rx="1.6" ry="2.8" fill="#f0e2c2" transform="rotate(25 396.6 311.4)"/>
<ellipse cx="407.4" cy="313.4" rx="2.2" ry="3.3" fill="#8d744a" opacity=".7" transform="rotate(25 406.8 312.6)"/>
<ellipse cx="406.8" cy="312.6" rx="1.6" ry="2.8" fill="#f0e2c2" transform="rotate(25 406.8 312.6)"/>
<ellipse cx="417.6" cy="314.6" rx="2.2" ry="3.3" fill="#8d744a" opacity=".7" transform="rotate(25 416.9 313.8)"/>
<ellipse cx="416.9" cy="313.8" rx="1.6" ry="2.8" fill="#f0e2c2" transform="rotate(25 416.9 313.8)"/>
<ellipse cx="427.7" cy="315.8" rx="2.2" ry="3.3" fill="#8d744a" opacity=".7" transform="rotate(25 427.0 315.0)"/>
<ellipse cx="427.0" cy="315.0" rx="1.6" ry="2.8" fill="#f0e2c2" transform="rotate(25 427.0 315.0)"/>
<polyline points="302.5,645.0 341.3,658.0 381.0,653.0" fill="none" stroke="#050505" stroke-width="1.6" stroke-dasharray="7 2"/>
<polygon points="301.3,646.3 341.3,659.5 372.5,656.0 382.5,656.5 382.5,662.0 372.5,661.3 341.3,665.6 301.3,650.6" fill="#d2b985" />
<polygon points="301.3,648.5 341.3,662.0 341.3,665.6 301.3,650.6" fill="#b99e69" />
<polygon points="395.0,478.0 416.3,470.0 416.3,657.0 395.0,651.0" fill="#d8c08f" />
<polygon points="400.0,478.0 416.3,470.0 431.0,470.0 414.0,478.0" fill="#e2cfa4" />
<polygon points="416.3,398.8 458.8,340.0 503.8,372.5 503.8,480.0 416.3,480.0" fill="#dbc291" />
<polygon points="391.0,445.0 414.5,430.0 415.0,437.0 393.0,452.0" fill="#9a8258" />
<polygon points="391.0,445.0 414.5,430.0 414.5,432.0 391.5,447.0" fill="#b9a070" />
<polygon points="458.8,328.8 503.8,331.5 503.8,354.0" fill="#33201d" />
<polygon points="458.8,329.5 503.8,354.5 503.8,372.5 458.8,342.0" fill="#ecdcb6" />
<polyline points="458.8,336.8 503.8,364.5" fill="none" stroke="#9c8152" stroke-width="5" stroke-dasharray="2.5 2.5" opacity="0.75"/>
<polygon points="400.0,390.0 458.8,330.0 458.8,347.0 416.3,399.0" fill="#ecdcb6" />
<polyline points="408.1,395.5 458.8,339.5" fill="none" stroke="#9c8152" stroke-width="6" stroke-dasharray="3 2.5" opacity="0.75"/>
<polygon points="397.5,388.8 458.8,328.3 459.5,330.5 399.0,391.5" fill="#2a1a14" />
<polygon points="397.5,389.0 400.0,392.0 419.0,401.0 416.0,398.0" fill="#c8b48a" />
<ellipse cx="462.5" cy="318.5" rx="6.5" ry="8.5" fill="#dccaa0"/><ellipse cx="461" cy="316" rx="3.5" ry="5" fill="#e9d9b4"/><rect x="459" y="325" width="7" height="4" fill="#cdb98f"/>
<path d="M465.0 447.0V408.5A3.5 3.5 0 0 1 472.0 408.5V447.0Z" fill="#cdb380" stroke="#c9ae7a" stroke-width="0.8"/>
<polygon points="416.3,480.0 503.8,480.0 503.8,690.0 455.0,672.0 416.3,660.0" fill="#d3ba87" />
<polygon points="431.0,486.0 497.0,486.0 497.0,671.0 431.0,666.0" fill="#dcc593" />
<polygon points="416.3,486.0 431.0,486.0 431.0,665.0 416.3,658.0" fill="#cfc0a0" />
<polygon points="415.0,472.5 503.8,472.5 497.0,480.0 414.0,480.0" fill="#33201d" />
<polygon points="435.0,488.5 495.0,488.5 495.0,496.0 435.0,496.0" fill="#ecdcb6" />
<polyline points="435.0,493.2 495.0,493.2" fill="none" stroke="#9c8152" stroke-width="3" stroke-dasharray="2 2" opacity="0.75"/>
<path d="M445.5 577.0 A62.3 62.3 0 0 1 470.0 527.5 A62.3 62.3 0 0 1 494.5 581.0 Z" fill="#e4d2a6"/>
<path d="M447.5 577.0 A57.9 57.9 0 0 1 470.2 531.0 A57.9 57.9 0 0 1 493.0 581.0 Z" fill="#a98c58"/>
<path d="M452.0 577.0 A57.5 57.5 0 0 1 472.5 533.0 A57.5 57.5 0 0 1 493.0 581.0 Z" fill="#e2cfa2"/>
<path d="M455.0 577.0 A52.0 52.0 0 0 1 473.8 537.0 A52.0 52.0 0 0 1 492.5 581.0 Z" fill="#a98c58"/>
<path d="M459.5 577.0 A50.9 50.9 0 0 1 476.0 539.5 A50.9 50.9 0 0 1 492.5 581.0 Z" fill="#e2cfa2"/>
<path d="M462.5 577.0 A45.4 45.4 0 0 1 477.2 543.5 A45.4 45.4 0 0 1 492.0 581.0 Z" fill="#a98c58"/>
<path d="M467.0 577.0 A44.7 44.7 0 0 1 479.5 546.0 A44.7 44.7 0 0 1 492.0 581.0 Z" fill="#e0cc9e"/>
<path d="M470.0 578.0 A39.3 39.3 0 0 1 480.8 551.0 A39.3 39.3 0 0 1 491.5 582.0 Z" fill="#b69a66"/>
<path d="M474.0 579.0 A43.0 43.0 0 0 1 482.8 553.0 A43.0 43.0 0 0 1 491.5 583.0 Z" fill="#e6d4aa"/>
<polyline points="395.0,563.0 416.0,566.0 431.0,569.5 446.0,573.5" fill="none" stroke="#050505" stroke-width="0.9" stroke-dasharray="5 4"/>
<polyline points="395.0,565.5 416.0,568.5 431.0,572.0 446.0,576.0" fill="none" stroke="#b59b69" stroke-width="1.2" />
<polygon points="445.5,576.0 476.0,579.5 476.0,643.0 445.5,634.0" fill="#d9c292" />
<polygon points="476.0,579.5 495.0,582.0 495.0,652.0 476.0,646.0" fill="#d5bc89" />
<polygon points="453.6,578.0 457.2,578.0 457.2,632.0 453.6,632.0" fill="#f1e2c0" />
<polygon points="463.2,579.0 466.8,579.0 466.8,633.5 463.2,633.5" fill="#f1e2c0" />
<polygon points="450.0,574.0 470.0,576.5 470.0,580.0 450.0,577.5" fill="#e9d8b0" />
<polygon points="478.0,583.5 487.4,584.5 487.4,645.0 478.0,642.0" fill="#a08d8c" />
<polygon points="478.0,583.5 487.4,584.5 487.4,597.0 478.0,595.0" fill="#857270" />
<polygon points="431.0,630.0 453.0,635.5 453.0,638.5 431.0,633.0" fill="#b89e6b" />
<polygon points="483.0,644.0 497.0,647.0 497.0,684.0 483.0,678.0" fill="#dbc392" />
<polygon points="483.0,644.0 497.0,647.0 497.0,650.0 483.0,647.0" fill="#b89e6b" />
<polygon points="382.5,651.5 400.0,651.0 416.0,656.0 431.0,664.0 497.0,670.0 500.0,680.0 500.0,697.0 470.0,687.0 431.0,672.0 400.0,662.0 382.5,657.0" fill="#050505" />
<polygon points="382.5,657.0 400.0,662.0 431.0,672.0 470.0,687.0 500.0,697.0 500.0,704.5 470.0,694.5 431.0,679.0 400.0,668.0 382.5,662.0" fill="#d2b985" />
<polygon points="382.5,660.0 400.0,665.5 431.0,676.5 470.0,692.0 500.0,702.0 500.0,704.5 470.0,694.5 431.0,679.0 400.0,668.0 382.5,662.0" fill="#b89d69" />
<polygon points="428.8,674.5 470.0,685.0 468.0,689.5 436.0,681.0" fill="#050505" />
<polygon points="410.0,678.8 431.3,676.3 470.0,688.8 452.5,693.8" fill="#050505" />
<polygon points="410.0,678.8 452.5,693.8 452.5,697.8 410.0,681.0" fill="#dcc695" />
<polygon points="452.5,693.8 470.0,688.8 470.0,692.0 452.5,697.8" fill="#c2a873" />
<polyline points="410.0,678.5 431.3,676.0 470.0,688.5" fill="none" stroke="#dcc695" stroke-width="1" />
<polygon points="504.3,253.8 570.8,241.3 570.8,746.3 501.0,720.0 497.5,600.0 497.5,481.0 504.3,481.0" fill="#dac392" />
<polygon points="502.5,605.0 570.8,619.0 570.8,746.3 501.0,720.0" fill="#e0c794" />
<polygon points="570.8,241.3 671.3,252.5 671.3,481.0 676.3,481.0 676.3,723.8 570.8,746.3" fill="#cfb888" />
<polygon points="504.3,253.8 570.8,241.3 570.8,480.0 504.3,480.0" fill="url(#gtop)" />
<polygon points="570.8,241.3 671.3,252.5 671.3,480.0 570.8,480.0" fill="url(#gtop)" />
<polygon points="570.8,616.0 676.3,601.0 676.3,723.8 570.8,746.3" fill="#d5bb8a" />
<path d="M510.0 335.0V270.5A8.5 8.5 0 0 1 527.0 270.5V335.0Z" fill="#c9ae7c" stroke="#efdfba" stroke-width="2"/>
<polygon points="517.6,274.0 525.0,274.0 525.0,335.0 517.6,335.0" fill="#b19665" />
<polygon points="513.0,288.0 516.0,288.0 516.0,335.0 513.0,335.0" fill="#f1e2c0" />
<path d="M538.0 331.0V270.0A12.0 12.0 0 0 1 562.0 270.0V331.0Z" fill="#c9ae7c" stroke="#efdfba" stroke-width="2"/>
<polygon points="548.8,270.0 560.0,270.0 560.0,331.0 548.8,331.0" fill="#b19665" />
<polygon points="541.0,284.0 544.0,284.0 544.0,331.0 541.0,331.0" fill="#f1e2c0" />
<polygon points="527.0,300.0 532.0,300.0 532.0,318.0 527.0,318.0" fill="#8f98a8" />
<polygon points="555.0,298.0 560.0,298.0 560.0,312.0 555.0,312.0" fill="#8f98a8" />
<polygon points="541.0,290.0 547.0,289.0 547.0,330.0 541.0,331.0" fill="#f1e2c0" />
<path d="M583.0 334.0V278.5A17.5 17.5 0 0 1 618.0 278.5V334.0Z" fill="#d6bf90" stroke="#efdfba" stroke-width="2"/>
<polygon points="587.0,275.0 598.8,275.0 598.8,334.0 587.0,334.0" fill="#b79d6c" />
<path d="M628.0 336.0V283.0A16.0 16.0 0 0 1 660.0 283.0V336.0Z" fill="#d6bf90" stroke="#efdfba" stroke-width="2"/>
<polygon points="632.0,281.0 642.4,281.0 642.4,336.0 632.0,336.0" fill="#b79d6c" />
<polygon points="610.0,282.0 616.0,282.0 616.0,331.0 610.0,331.0" fill="#f1e2c0" />
<polygon points="652.0,288.0 657.0,288.0 657.0,334.0 652.0,334.0" fill="#f1e2c0" />
<polygon points="586.0,288.0 592.0,288.0 592.0,330.0 586.0,330.0" fill="#7d6d55" />
<polygon points="629.0,284.0 640.0,284.0 640.0,300.0 629.0,300.0" fill="#8a7363" />
<polygon points="629.0,300.0 640.0,300.0 638.0,322.0 628.0,322.0" fill="#9aa3b4" />
<polygon points="631.5,322.0 636.0,322.0 636.0,335.0 631.5,335.0" fill="#e3d3ad" />
<polygon points="501.5,341.0 570.8,331.5 570.8,336.0 501.5,346.0" fill="#ecdcb6" />
<polygon points="570.8,331.5 676.0,341.5 676.0,346.0 570.8,336.0" fill="#dfcda2" />
<line x1="502.0" y1="343.5" x2="570.8" y2="334.0" stroke="#050505" stroke-width="0.9" stroke-dasharray="2 3"/>
<line x1="570.8" y1="334.5" x2="672.0" y2="344.0" stroke="#050505" stroke-width="0.9" stroke-dasharray="3 4"/>
<line x1="501.0" y1="296.0" x2="533.0" y2="287.0" stroke="#050505" stroke-width="0.9" stroke-dasharray="8 20"/>
<line x1="560.0" y1="280.0" x2="590.0" y2="279.0" stroke="#050505" stroke-width="1" />
<line x1="640.0" y1="288.0" x2="676.0" y2="294.0" stroke="#050505" stroke-width="0.9" stroke-dasharray="9 22"/>
<path d="M530.0 442.0V393.0A5.5 5.5 0 0 1 541.0 393.0V442.0Z" fill="#c9b07f" stroke="#d2b988" stroke-width="0.8"/>
<path d="M612.5 442.0V396.8A10.8 10.8 0 0 1 634.0 396.8V442.0Z" fill="#cbb282" stroke="#cbb282" stroke-width="0.5"/>
<polygon points="614.0,392.0 622.0,392.0 622.0,442.0 614.0,442.0" fill="#dec999" />
<polygon points="626.0,386.0 633.0,390.0 633.0,442.0 626.0,442.0" fill="#e5d2a5" />
<polyline points="497.5,481.5 570.8,486.5 676.3,481.5" fill="none" stroke="#b79c69" stroke-width="1.3" />
<polyline points="503.0,483.0 570.8,485.0 672.0,483.0" fill="none" stroke="#050505" stroke-width="0.9" stroke-dasharray="4 75"/>
<path d="M523.0 602.0V546.0A11.0 11.0 0 0 1 545.0 546.0V602.0Z" fill="#d3ba88" stroke="#eadab3" stroke-width="1.5"/>
<polygon points="529.0,560.0 533.0,560.0 533.0,602.0 529.0,602.0" fill="#f1e2c0" />
<polygon points="520.0,600.0 545.0,605.0 545.0,607.0 520.0,602.0" fill="#050505" />
<path d="M603.0 606.0V554.5A18.5 18.5 0 0 1 640.0 554.5V606.0Z" fill="#cfb683" stroke="#eadab3" stroke-width="1.5"/>
<polygon points="632.0,562.0 636.5,562.0 636.5,603.0 632.0,603.0" fill="#f1e2c0" />
<polygon points="612.0,606.0 640.0,602.0 640.0,604.0 612.0,608.0" fill="#050505" />
<polyline points="501.0,553.0 523.0,556.0 545.0,562.0 570.8,565.0 603.0,562.0 640.0,558.0 676.0,554.0" fill="none" stroke="#050505" stroke-width="0.9" stroke-dasharray="6 6"/>
<polygon points="502.5,602.5 570.8,616.3 570.8,622.0 502.5,608.0" fill="#d3ba87" />
<polygon points="570.8,616.3 676.3,601.3 676.3,607.0 570.8,622.0" fill="#c3a975" />
<polyline points="502.5,602.5 570.8,616.3 676.3,601.3" fill="none" stroke="#050505" stroke-width="0.9" stroke-dasharray="5 4"/>
<polyline points="502.5,608.5 570.8,622.5 676.3,607.5" fill="none" stroke="#a98f5e" stroke-width="1.3" />
<polyline points="501.3,677.0 570.8,699.5 676.3,680.7" fill="none" stroke="#b39866" stroke-width="3.2" />
<polyline points="501.3,679.5 570.8,702.0 676.3,683.0" fill="none" stroke="#e2ce9f" stroke-width="0.8" />
<polygon points="481.3,238.8 567.5,208.0 571.3,240.5 505.0,255.0" fill="#e3d2a8" />
<polygon points="567.5,208.0 698.8,237.0 671.3,255.0 571.3,240.5" fill="#dfcda2" />
<polygon points="567.5,203.0 587.5,201.0 698.8,234.5 696.0,238.0 568.5,208.0" fill="#33201d" />
<polygon points="481.3,238.8 567.5,203.5 568.5,208.0 483.5,240.8" fill="#4a3428" />
<line x1="489.0" y1="242.5" x2="567.5" y2="219.5" stroke="#140c08" stroke-width="3" stroke-dasharray="7 3 4 2 9 4" stroke-linecap="butt"/>
<line x1="567.5" y1="219.5" x2="685.0" y2="241.5" stroke="#140c08" stroke-width="3" stroke-dasharray="10 4 6 3 8 5" stroke-linecap="butt"/>
<line x1="497.0" y1="235.0" x2="560.0" y2="214.0" stroke="#140c08" stroke-width="1.2" stroke-dasharray="8 9" stroke-linecap="butt"/>
<line x1="590.0" y1="215.5" x2="670.0" y2="231.0" stroke="#140c08" stroke-width="1.2" stroke-dasharray="9 12" stroke-linecap="butt"/>
<ellipse cx="499.5" cy="250.8" rx="3.2" ry="5.1" fill="#8d744a" opacity=".7" transform="rotate(-35 498.8 250.0)"/>
<ellipse cx="498.8" cy="250.0" rx="2.6" ry="4.6" fill="#f0e2c2" transform="rotate(-35 498.8 250.0)"/>
<ellipse cx="510.5" cy="247.3" rx="3.2" ry="5.1" fill="#8d744a" opacity=".7" transform="rotate(-35 509.8 246.5)"/>
<ellipse cx="509.8" cy="246.5" rx="2.6" ry="4.6" fill="#f0e2c2" transform="rotate(-35 509.8 246.5)"/>
<ellipse cx="521.6" cy="243.7" rx="3.2" ry="5.1" fill="#8d744a" opacity=".7" transform="rotate(-35 520.9 242.9)"/>
<ellipse cx="520.9" cy="242.9" rx="2.6" ry="4.6" fill="#f0e2c2" transform="rotate(-35 520.9 242.9)"/>
<ellipse cx="532.6" cy="240.2" rx="3.2" ry="5.1" fill="#8d744a" opacity=".7" transform="rotate(-35 531.9 239.4)"/>
<ellipse cx="531.9" cy="239.4" rx="2.6" ry="4.6" fill="#f0e2c2" transform="rotate(-35 531.9 239.4)"/>
<ellipse cx="543.6" cy="236.7" rx="3.2" ry="5.1" fill="#8d744a" opacity=".7" transform="rotate(-35 542.9 235.9)"/>
<ellipse cx="542.9" cy="235.9" rx="2.6" ry="4.6" fill="#f0e2c2" transform="rotate(-35 542.9 235.9)"/>
<ellipse cx="554.7" cy="233.1" rx="3.2" ry="5.1" fill="#8d744a" opacity=".7" transform="rotate(-35 554.0 232.3)"/>
<ellipse cx="554.0" cy="232.3" rx="2.6" ry="4.6" fill="#f0e2c2" transform="rotate(-35 554.0 232.3)"/>
<ellipse cx="565.7" cy="229.6" rx="3.2" ry="5.1" fill="#8d744a" opacity=".7" transform="rotate(-35 565.0 228.8)"/>
<ellipse cx="565.0" cy="228.8" rx="2.6" ry="4.6" fill="#f0e2c2" transform="rotate(-35 565.0 228.8)"/>
<ellipse cx="577.7" cy="229.8" rx="3.4" ry="5.3" fill="#8d744a" opacity=".7" transform="rotate(25 577.0 229.0)"/>
<ellipse cx="577.0" cy="229.0" rx="2.8" ry="4.8" fill="#f0e2c2" transform="rotate(25 577.0 229.0)"/>
<ellipse cx="593.8" cy="233.0" rx="3.4" ry="5.3" fill="#8d744a" opacity=".7" transform="rotate(25 593.1 232.2)"/>
<ellipse cx="593.1" cy="232.2" rx="2.8" ry="4.8" fill="#f0e2c2" transform="rotate(25 593.1 232.2)"/>
<ellipse cx="610.0" cy="236.1" rx="3.4" ry="5.3" fill="#8d744a" opacity=".7" transform="rotate(25 609.3 235.3)"/>
<ellipse cx="609.3" cy="235.3" rx="2.8" ry="4.8" fill="#f0e2c2" transform="rotate(25 609.3 235.3)"/>
<ellipse cx="626.1" cy="239.3" rx="3.4" ry="5.3" fill="#8d744a" opacity=".7" transform="rotate(25 625.4 238.5)"/>
<ellipse cx="625.4" cy="238.5" rx="2.8" ry="4.8" fill="#f0e2c2" transform="rotate(25 625.4 238.5)"/>
<ellipse cx="642.2" cy="242.5" rx="3.4" ry="5.3" fill="#8d744a" opacity=".7" transform="rotate(25 641.5 241.7)"/>
<ellipse cx="641.5" cy="241.7" rx="2.8" ry="4.8" fill="#f0e2c2" transform="rotate(25 641.5 241.7)"/>
<ellipse cx="658.4" cy="245.6" rx="3.4" ry="5.3" fill="#8d744a" opacity=".7" transform="rotate(25 657.7 244.8)"/>
<ellipse cx="657.7" cy="244.8" rx="2.8" ry="4.8" fill="#f0e2c2" transform="rotate(25 657.7 244.8)"/>
<ellipse cx="674.5" cy="248.8" rx="3.4" ry="5.3" fill="#8d744a" opacity=".7" transform="rotate(25 673.8 248.0)"/>
<ellipse cx="673.8" cy="248.0" rx="2.8" ry="4.8" fill="#f0e2c2" transform="rotate(25 673.8 248.0)"/>
<ellipse cx="570" cy="228" rx="4.5" ry="5.5" fill="#ecdcb8"/>
<polyline points="501.0,720.0 570.8,746.3 676.3,723.8" fill="none" stroke="#050505" stroke-width="3" />
<polygon points="492.5,721.3 501.0,720.0 570.8,747.5 676.3,725.0 683.8,725.0 683.8,732.5 568.8,758.8 492.5,727.5" fill="#d8c08d" />
<polygon points="492.5,724.0 568.8,752.0 568.8,758.8 492.5,727.5" fill="#c9af7b" />
<polygon points="568.8,752.0 683.8,727.0 683.8,732.5 568.8,758.8" fill="#b89d68" />
<line x1="404.3" y1="598.0" x2="404.3" y2="693.0" stroke="#4fb84f" stroke-width="1.2" />
<polygon points="404.3,596.0 402.5,604.0 406.0,604.0" fill="#3fc23f" />
<text x="401.500" y="601" font-size="6" fill="#3fc23f" font-family="Liberation Sans,sans-serif">Y</text>
<line x1="404.0" y1="693.3" x2="445.0" y2="711.5" stroke="#c8405a" stroke-width="1.1" />
<line x1="404.0" y1="693.3" x2="430.0" y2="688.5" stroke="#3a4ac6" stroke-width="1.1" />
<rect x="402.500" y="691.500" width="3" height="3" fill="#111"/>
<line x1="75.0" y1="776.0" x2="75.0" y2="799.0" stroke="#3fc23f" stroke-width="1.3" />
<line x1="75.0" y1="799.0" x2="90.0" y2="800.0" stroke="#4a55d8" stroke-width="1.3" />
<text x="71.500" y="778" font-size="9" fill="#5fd35f" font-family="Liberation Sans,sans-serif">Y</text>
<text x="90" y="803" font-size="9" fill="#c8506e" font-family="Liberation Sans,sans-serif">X</text><text x="91.500" y="804" font-size="9" fill="#6a5fd0" font-family="Liberation Sans,sans-serif">Z</text>
<rect x="43" y="110" width="62" height="16" fill="#4a4a4a" opacity=".55"/>
<text x="45" y="122" font-size="11" fill="#ececec" font-family="Liberation Sans,sans-serif">Perspective</text>
</svg>
<div style="left:39px;top:834px;width:1328px;height:55px;background:#4b4b4b;"></div>
<div class="grip" style="left:40px;top:842px;width:6px;height:18px;"></div>
<div style="left:48px;top:838px;width:1248px;height:24px;background:#3c3c3c;border-top:1px solid #2f2f2f;"></div>
<svg style="left:0;top:838px" width="1300" height="24" viewBox="0 0 1300 24"><path d="M53.5 14V23 M67.2 18.500V23 M80.9 18.500V23 M94.6 18.500V23 M108.3 18.500V23 M122.0 14V23 M135.7 18.500V23 M149.4 18.500V23 M163.1 18.500V23 M176.8 18.500V23 M190.5 14V23 M204.2 18.500V23 M217.9 18.500V23 M231.6 18.500V23 M245.3 18.500V23 M259.0 14V23 M272.7 18.500V23 M286.4 18.500V23 M300.1 18.500V23 M313.8 18.500V23 M327.5 14V23 M341.2 18.500V23 M354.9 18.500V23 M368.6 18.500V23 M382.3 18.500V23 M396.0 14V23 M409.7 18.500V23 M423.4 18.500V23 M437.1 18.500V23 M450.8 18.500V23 M464.5 14V23 M478.2 18.500V23 M491.9 18.500V23 M505.6 18.500V23 M519.3 18.500V23 M533.0 14V23 M546.7 18.500V23 M560.4 18.500V23 M574.1 18.500V23 M587.8 18.500V23 M601.5 14V23 M615.2 18.500V23 M628.9 18.500V23 M642.6 18.500V23 M656.3 18.500V23 M670.0 14V23 M683.7 18.500V23 M697.4 18.500V23 M711.1 18.500V23 M724.8 18.500V23 M738.5 14V23 M752.2 18.500V23 M765.9 18.500V23 M779.6 18.500V23 M793.3 18.500V23 M807.0 14V23 M820.7 18.500V23 M834.4 18.500V23 M848.1 18.500V23 M861.8 18.500V23 M875.5 14V23 M889.2 18.500V23 M902.9 18.500V23 M916.6 18.500V23 M930.3 18.500V23 M944.0 14V23 M957.7 18.500V23 M971.4 18.500V23 M985.1 18.500V23 M998.8 18.500V23 M1012.5 14V23 M1026.2 18.500V23 M1039.9 18.500V23 M1053.6 18.500V23 M1067.3 18.500V23 M1081.0 14V23 M1094.7 18.500V23 M1108.4 18.500V23 M1122.1 18.500V23 M1135.8 18.500V23 M1149.5 14V23 M1163.2 18.500V23 M1176.9 18.500V23 M1190.6 18.500V23 M1204.3 18.500V23 M1218.0 14V23 M1231.7 18.500V23 M1245.4 18.500V23 M1259.1 18.500V23 M1272.8 18.500V23 M1286.5 14V23" stroke="#cfcfcf" stroke-width="1" fill="none"/><rect x="49.500" y="1.500" width="8" height="11" fill="#3ddc84" stroke="#1d7f48" stroke-width=".6"/></svg>
<span class="t" style="left:60px;top:838px;color:#d8d8d8;font-size:12px;">0</span>
<span class="t" style="left:118.7px;top:838px;color:#d8d8d8;font-size:12px;">5</span>
<span class="t" style="left:183.8px;top:838px;color:#d8d8d8;font-size:12px;">10</span>
<span class="t" style="left:252.3px;top:838px;color:#d8d8d8;font-size:12px;">15</span>
<span class="t" style="left:320.8px;top:838px;color:#d8d8d8;font-size:12px;">20</span>
<span class="t" style="left:389.3px;top:838px;color:#d8d8d8;font-size:12px;">25</span>
<span class="t" style="left:457.8px;top:838px;color:#d8d8d8;font-size:12px;">30</span>
<span class="t" style="left:526.3px;top:838px;color:#d8d8d8;font-size:12px;">35</span>
<span class="t" style="left:594.8px;top:838px;color:#d8d8d8;font-size:12px;">40</span>
<span class="t" style="left:663.3px;top:838px;color:#d8d8d8;font-size:12px;">45</span>
<span class="t" style="left:731.8px;top:838px;color:#d8d8d8;font-size:12px;">50</span>
<span class="t" style="left:800.3px;top:838px;color:#d8d8d8;font-size:12px;">55</span>
<span class="t" style="left:868.8px;top:838px;color:#d8d8d8;font-size:12px;">60</span>
<span class="t" style="left:937.3px;top:838px;color:#d8d8d8;font-size:12px;">65</span>
<span class="t" style="left:1005.8px;top:838px;color:#d8d8d8;font-size:12px;">70</span>
<span class="t" style="left:1074.3px;top:838px;color:#d8d8d8;font-size:12px;">75</span>
<span class="t" style="left:1142.8px;top:838px;color:#d8d8d8;font-size:12px;">80</span>
<span class="t" style="left:1211.3px;top:838px;color:#d8d8d8;font-size:12px;">85</span>
<span class="t" style="left:1281px;top:838px;color:#d8d8d8;font-size:12px;">90</span>
<div class="fld" style="left:1300px;top:842px;width:66px;height:16px;"></div><span class="t" style="left:1305px;top:843.0px;color:#d0d0d0;">0 F</span><svg style="left:1357px;top:844.5px" width="6" height="11" viewBox="0 0 6 11"><path d="M3 0.500l2.500 3.500h-5zM3 10.500l2.500-3.500h-5z" fill="#a8a8a8"/></svg>
<div class="grip" style="left:40px;top:868px;width:6px;height:14px;"></div>
<div class="fld" style="left:48px;top:867px;width:65px;height:16px;"></div><span class="t" style="left:53px;top:868.0px;color:#d0d0d0;">0 F</span><svg style="left:104px;top:869.5px" width="6" height="11" viewBox="0 0 6 11"><path d="M3 0.500l2.500 3.500h-5zM3 10.500l2.500-3.500h-5z" fill="#a8a8a8"/></svg>
<div style="left:120px;top:867px;width:836px;height:15px;background:linear-gradient(#8a8a8a,#6c6c6c);border:1px solid #3a3a3a;border-radius:3px;"></div>
<svg style="left:124px;top:870px" width="10" height="9"><path d="M8 1L2 4.500L8 8z" fill="#ddd"/></svg>
<svg style="left:943px;top:870px" width="10" height="9"><path d="M2 1L8 4.500L2 8z" fill="#ddd"/></svg>
<span class="t" style="left:137px;top:868px;color:#2a2a2a;">0 F</span>
<span class="t" style="left:916px;top:868px;color:#2a2a2a;">90 F</span>
<div class="fld" style="left:962px;top:867px;width:65px;height:16px;"></div><span class="t" style="left:967px;top:868.0px;color:#d0d0d0;">90 F</span><svg style="left:1018px;top:869.5px" width="6" height="11" viewBox="0 0 6 11"><path d="M3 0.500l2.500 3.500h-5zM3 10.500l2.500-3.500h-5z" fill="#a8a8a8"/></svg>
<div class="btn" style="left:1035.5px;top:866px;width:20px;height:20px;"></div>
<svg style="left:1035.5px;top:867px" width="20" height="18" viewBox="0 0 20 18"><path d="M4 4v10M15 4l-8 5 8 5z M11 4l-6 5 6 5" fill="#222" stroke="#222" stroke-width="1"/></svg>
<div class="btn" style="left:1055.4px;top:866px;width:20px;height:20px;"></div>
<svg style="left:1055.4px;top:867px" width="20" height="18" viewBox="0 0 20 18"><path d="M13 4l-7 5 7 5zM15 4v10" fill="#222" stroke="#222" stroke-width="1"/></svg>
<div class="btn" style="left:1075.3px;top:866px;width:20px;height:20px;"></div>
<svg style="left:1075.3px;top:867px" width="20" height="18" viewBox="0 0 20 18"><path d="M15 3l-11 6 11 6z" fill="#2fc24a" stroke="#0c4a18" stroke-width="1"/></svg>
<div class="btn" style="left:1095.2px;top:866px;width:20px;height:20px;"></div>
<svg style="left:1095.2px;top:867px" width="20" height="18" viewBox="0 0 20 18"><path d="M5 3l11 6-11 6z" fill="#2fc24a" stroke="#0c4a18" stroke-width="1"/></svg>
<div class="btn" style="left:1115.1px;top:866px;width:20px;height:20px;"></div>
<svg style="left:1115.1px;top:867px" width="20" height="18" viewBox="0 0 20 18"><path d="M7 4l7 5-7 5zM5 4v10" fill="#222" stroke="#222" stroke-width="1"/></svg>
<div class="btn" style="left:1135.0px;top:866px;width:20px;height:20px;"></div>
<svg style="left:1135.0px;top:867px" width="20" height="18" viewBox="0 0 20 18"><path d="M16 4v10M5 4l8 5-8 5z M9 4l6 5-6 5" fill="#222" stroke="#222" stroke-width="1"/></svg>
<div class="btn" style="left:1161px;top:866px;width:20px;height:20px;"></div>
<svg style="left:1161px;top:867px" width="20" height="18" viewBox="0 0 20 18"><circle cx="10" cy="9" r="6.500" fill="#7a7a7a" stroke="#5a5a5a"/><path d="M7 12l6-6" stroke="#909090" stroke-width="2"/></svg>
<div class="btn" style="left:1181px;top:866px;width:20px;height:20px;"></div>
<svg style="left:1181px;top:867px" width="20" height="18" viewBox="0 0 20 18"><circle cx="10" cy="9" r="7" fill="#e0382c" stroke="#2b2b2b"/><path d="M10 4a5 5 0 0 0 0 10M10 4a5 5 0 0 1 0 10" stroke="#2b2b2b" fill="none" stroke-width="1.400"/></svg>
<div class="btn" style="left:1201px;top:866px;width:20px;height:20px;"></div>
<svg style="left:1201px;top:867px" width="20" height="18" viewBox="0 0 20 18"><circle cx="10" cy="9" r="7" fill="#e0382c" stroke="#2b2b2b"/><text x="10" y="13.500" font-size="12" font-weight="bold" text-anchor="middle" fill="#2b2b2b" font-family="Liberation Sans,sans-serif">?</text></svg>
<div class="btn on" style="left:1228px;top:866px;width:20px;height:20px;"></div>
<svg style="left:1228px;top:867px" width="20" height="18" viewBox="0 0 20 18"><path d="M10 2l3 3.500h-2v2.500h2.500v-2l3.500 3-3.500 3v-2h-2.500v2.500h2l-3 3.500-3-3.500h2v-2.500h-2.500v2l-3.500-3 3.500-3v2h2.500v-2.500h-2z" fill="#f2a52e" stroke="#2b2b2b" stroke-width=".7"/></svg>
<div class="btn on" style="left:1247.8px;top:866px;width:20px;height:20px;"></div>
<svg style="left:1247.8px;top:867px" width="20" height="18" viewBox="0 0 20 18"><rect x="4" y="3.500" width="12" height="12" fill="#f2a52e" stroke="#2b2b2b"/><path d="M4 9h6v6.500" fill="none" stroke="#2b2b2b"/></svg>
<div class="btn on" style="left:1267.5px;top:866px;width:20px;height:20px;"></div>
<svg style="left:1267.5px;top:867px" width="20" height="18" viewBox="0 0 20 18"><circle cx="10" cy="9" r="5.500" fill="none" stroke="#2b2b2b" stroke-width="3.600"/><circle cx="10" cy="9" r="5.500" fill="none" stroke="#f2a52e" stroke-width="2"/></svg>
<div class="btn on" style="left:1287.2px;top:866px;width:20px;height:20px;"></div>
<svg style="left:1287.2px;top:867px" width="20" height="18" viewBox="0 0 20 18"><circle cx="10" cy="9" r="7" fill="#e8e8e8" stroke="#f2a52e" stroke-width="1.500"/><circle cx="10" cy="9" r="7.800" fill="none" stroke="#2b2b2b" stroke-width=".7"/><text x="10" y="13" font-size="11" font-weight="bold" text-anchor="middle" fill="#2b2b2b" font-family="Liberation Sans,sans-serif">P</text></svg>
<div class="btn" style="left:1307.0px;top:866px;width:20px;height:20px;"></div>
<svg style="left:1307.0px;top:867px" width="20" height="18" viewBox="0 0 20 18"><g fill="#f2a52e"><circle cx="5" cy="4" r="1.500"/><circle cx="10" cy="4" r="1.500"/><circle cx="15" cy="4" r="1.500"/><circle cx="5" cy="9" r="1.500"/><circle cx="15" cy="9" r="1.500"/><circle cx="5" cy="14" r="1.500"/><circle cx="10" cy="14" r="1.500"/><circle cx="15" cy="14" r="1.500"/></g><circle cx="10" cy="9" r="1.500" fill="#2b2b2b"/></svg>
<div class="btn" style="left:1326.8px;top:866px;width:20px;height:20px;"></div>
<svg style="left:1326.8px;top:867px" width="20" height="18" viewBox="0 0 20 18"><path d="M5 12l8-8 3 3-8 8z" fill="#2b2b2b"/><circle cx="7" cy="13" r="3" fill="#d8d8d8" stroke="#2b2b2b"/><path d="M13 11l4 4" stroke="#2b2b2b" stroke-width="1.500"/></svg>
<div class="btn on" style="left:1346.5px;top:866px;width:20px;height:20px;"></div>
<svg style="left:1346.5px;top:867px" width="20" height="18" viewBox="0 0 20 18"><rect x="3" y="4" width="9" height="11" fill="#e8e8e8" stroke="#2b2b2b"/><rect x="11" y="2" width="7" height="7" fill="#f2a52e" stroke="#2b2b2b"/><path d="M13 18h6v-6z" fill="#fff"/></svg>
<div class="hdr" style="left:40px;top:889px;width:1025px;height:17px;"></div>
<div style="left:44px;top:893px;width:9px;height:9px;background:linear-gradient(135deg,#8a8a8a,#5e5e5e);border:1px solid #4a4a4a;"></div>
<span class="t" style="left:64px;top:890px;color:#dadada;">Materials</span>
<div style="left:40px;top:906px;width:1025px;height:20px;background:#4b4b4b;border-bottom:1px solid #3a3a3a;"></div>
<div class="grip" style="left:45px;top:910px;width:12px;height:11px;"></div>
<span class="t" style="left:66px;top:909px;">File</span>
<span class="t" style="left:96px;top:909px;">Edit</span>
<span class="t" style="left:128px;top:909px;">Function</span>
<span class="t" style="left:183px;top:909px;">Texture</span>
<div style="left:40px;top:927px;width:1025px;height:91px;background:#4c4c4c;border:1px solid #3e3e3e;border-top-color:#5e5e5e;"></div>
<div style="left:42px;top:929px;width:43px;height:58px;background:repeating-linear-gradient(135deg,#9a9a9a 0 5px,#7e7e7e 5px 10px);border:1px solid #3a3a3a;"></div>
<svg style="left:42px;top:929px" width="43" height="44" viewBox="0 0 43 44"><defs><radialGradient id="m0" cx=".4" cy=".32" r=".75"><stop offset="0" stop-color="#f5e2b4"/><stop offset=".55" stop-color="#c9a96a"/><stop offset="1" stop-color="#3a2c14"/></radialGradient></defs><circle cx="21.500" cy="21" r="19" fill="url(#m0)"/></svg>
<div style="left:43px;top:973px;width:41px;height:13px;background:#7a7a7a;"></div>
<span class="t" style="left:44px;top:972px;color:#e2e2e2;font-size:11.5px;">TxRmnc</span>
<div style="left:91px;top:929px;width:43px;height:58px;background:repeating-linear-gradient(135deg,#9a9a9a 0 5px,#7e7e7e 5px 10px);border:1px solid #3a3a3a;"></div>
<svg style="left:91px;top:929px" width="43" height="44" viewBox="0 0 43 44"><defs><radialGradient id="m1" cx=".4" cy=".32" r=".75"><stop offset="0" stop-color="#d6d2cc"/><stop offset=".55" stop-color="#8a8681"/><stop offset="1" stop-color="#2a2826"/></radialGradient></defs><circle cx="21.500" cy="21" r="19" fill="url(#m1)"/></svg>
<div style="left:92px;top:973px;width:41px;height:13px;background:#7a7a7a;"></div>
<span class="t" style="left:93px;top:972px;color:#e2e2e2;font-size:11.5px;">TxRmnc</span>
<div style="left:140px;top:929px;width:43px;height:58px;background:repeating-linear-gradient(135deg,#9a9a9a 0 5px,#7e7e7e 5px 10px);border:1px solid #3a3a3a;"></div>
<svg style="left:140px;top:929px" width="43" height="44" viewBox="0 0 43 44"><defs><radialGradient id="m2" cx=".4" cy=".32" r=".75"><stop offset="0" stop-color="#c9a99a"/><stop offset=".55" stop-color="#8a6658"/><stop offset="1" stop-color="#2a1a14"/></radialGradient></defs><circle cx="21.500" cy="21" r="19" fill="url(#m2)"/></svg>
<div style="left:141px;top:973px;width:41px;height:13px;background:#7a7a7a;"></div>
<span class="t" style="left:142px;top:972px;color:#e2e2e2;font-size:11.5px;">TxRmnc</span>
<div style="left:189px;top:929px;width:43px;height:58px;background:repeating-linear-gradient(135deg,#9a9a9a 0 5px,#7e7e7e 5px 10px);border:1px solid #3a3a3a;"></div>
<svg style="left:189px;top:929px" width="43" height="44" viewBox="0 0 43 44"><defs><radialGradient id="m3" cx=".4" cy=".32" r=".75"><stop offset="0" stop-color="#c4c6c9"/><stop offset=".55" stop-color="#7e8083"/><stop offset="1" stop-color="#222426"/></radialGradient></defs><circle cx="21.500" cy="21" r="19" fill="url(#m3)"/></svg>
<div style="left:190px;top:973px;width:41px;height:13px;background:#7a7a7a;"></div>
<span class="t" style="left:191px;top:972px;color:#e2e2e2;font-size:11.5px;">TxRmnc</span>
<div style="left:39px;top:1019px;width:1328px;height:20px;background:#4b4b4b;border-top:1px solid #5c5c5c;"></div>
<div class="grip" style="left:45px;top:1025px;width:11px;height:11px;"></div>
<span class="t" style="left:65px;top:1023px;color:#d2d2d2;letter-spacing:-0.15px;">Move: Click and drag to move elements. Hold down SHIFT to quantize movement / add to the selection in point mode, CTRL to remove.</span>
<div class="hdr" style="left:1069px;top:889px;width:298px;height:17px;"></div>
<div style="left:1073px;top:893px;width:9px;height:9px;background:linear-gradient(135deg,#8a8a8a,#5e5e5e);border:1px solid #4a4a4a;"></div>
<span class="t" style="left:1092px;top:890px;color:#dadada;">Coordinates</span>
<div style="left:1069px;top:906px;width:298px;height:20px;background:#4b4b4b;border-bottom:1px solid #3a3a3a;"></div>
<div class="grip" style="left:1074px;top:910px;width:12px;height:11px;"></div>
<span class="t" style="left:1092px;top:908px;color:#8a8a8a;">--</span>
<span class="t" style="left:1183px;top:908px;color:#8a8a8a;">--</span>
<span class="t" style="left:1275px;top:908px;color:#8a8a8a;">--</span>
<div style="left:1069px;top:927px;width:298px;height:91px;background:#4c4c4c;border:1px solid #3e3e3e;border-top-color:#5e5e5e;"></div>
<span class="t" style="left:1072px;top:933px;">X</span>
<span class="t" style="left:1170px;top:933px;">X</span>
<span class="t" style="left:1268px;top:933px;">H</span>
<div class="fld" style="left:1083px;top:933px;width:84px;height:14px;"></div><span class="t" style="left:1088px;top:933.0px;color:#777;">0 cm</span><svg style="left:1158px;top:934.5px" width="6" height="11" viewBox="0 0 6 11"><path d="M3 0.500l2.500 3.500h-5zM3 10.500l2.500-3.500h-5z" fill="#a8a8a8"/></svg>
<div class="fld" style="left:1181px;top:933px;width:84px;height:14px;"></div><span class="t" style="left:1186px;top:933.0px;color:#777;">0 cm</span><svg style="left:1256px;top:934.5px" width="6" height="11" viewBox="0 0 6 11"><path d="M3 0.500l2.500 3.500h-5zM3 10.500l2.500-3.500h-5z" fill="#a8a8a8"/></svg>
<div class="fld" style="left:1280px;top:933px;width:82px;height:14px;"></div><span class="t" style="left:1285px;top:933.0px;color:#777;">0 °</span><svg style="left:1353px;top:934.5px" width="6" height="11" viewBox="0 0 6 11"><path d="M3 0.500l2.500 3.500h-5zM3 10.500l2.500-3.500h-5z" fill="#a8a8a8"/></svg>
<span class="t" style="left:1072px;top:952px;">Y</span>
<span class="t" style="left:1170px;top:952px;">Y</span>
<span class="t" style="left:1268px;top:952px;">P</span>
<div class="fld" style="left:1083px;top:952px;width:84px;height:14px;"></div><span class="t" style="left:1088px;top:952.0px;color:#777;">0 cm</span><svg style="left:1158px;top:953.5px" width="6" height="11" viewBox="0 0 6 11"><path d="M3 0.500l2.500 3.500h-5zM3 10.500l2.500-3.500h-5z" fill="#a8a8a8"/></svg>
<div class="fld" style="left:1181px;top:952px;width:84px;height:14px;"></div><span class="t" style="left:1186px;top:952.0px;color:#777;">0 cm</span><svg style="left:1256px;top:953.5px" width="6" height="11" viewBox="0 0 6 11"><path d="M3 0.500l2.500 3.500h-5zM3 10.500l2.500-3.500h-5z" fill="#a8a8a8"/></svg>
<div class="fld" style="left:1280px;top:952px;width:82px;height:14px;"></div><span class="t" style="left:1285px;top:952.0px;color:#777;">0 °</span><svg style="left:1353px;top:953.5px" width="6" height="11" viewBox="0 0 6 11"><path d="M3 0.500l2.500 3.500h-5zM3 10.500l2.500-3.500h-5z" fill="#a8a8a8"/></svg>
<span class="t" style="left:1072px;top:971px;">Z</span>
<span class="t" style="left:1170px;top:971px;">Z</span>
<span class="t" style="left:1268px;top:971px;">B</span>
<div class="fld" style="left:1083px;top:971px;width:84px;height:14px;"></div><span class="t" style="left:1088px;top:971.0px;color:#777;">0 cm</span><svg style="left:1158px;top:972.5px" width="6" height="11" viewBox="0 0 6 11"><path d="M3 0.500l2.500 3.500h-5zM3 10.500l2.500-3.500h-5z" fill="#a8a8a8"/></svg>
<div class="fld" style="left:1181px;top:971px;width:84px;height:14px;"></div><span class="t" style="left:1186px;top:971.0px;color:#777;">0 cm</span><svg style="left:1256px;top:972.5px" width="6" height="11" viewBox="0 0 6 11"><path d="M3 0.500l2.500 3.500h-5zM3 10.500l2.500-3.500h-5z" fill="#a8a8a8"/></svg>
<div class="fld" style="left:1280px;top:971px;width:82px;height:14px;"></div><span class="t" style="left:1285px;top:971.0px;color:#777;">0 °</span><svg style="left:1353px;top:972.5px" width="6" height="11" viewBox="0 0 6 11"><path d="M3 0.500l2.500 3.500h-5zM3 10.500l2.500-3.500h-5z" fill="#a8a8a8"/></svg>
<div style="left:1083px;top:992px;width:84px;height:16px;background:#626262;border:1px solid #454545;border-radius:4px;"></div>
<span class="t" style="left:1090px;top:993px;color:#8a8a8a;">World</span>
<svg style="left:1151px;top:997px" width="10" height="6"><path d="M1 1h8l-4 4z" fill="#7e7e7e"/></svg>
<div style="left:1181px;top:992px;width:84px;height:16px;background:#626262;border:1px solid #454545;border-radius:4px;"></div>
<span class="t" style="left:1188px;top:993px;color:#8a8a8a;">Scale</span>
<svg style="left:1249px;top:997px" width="10" height="6"><path d="M1 1h8l-4 4z" fill="#7e7e7e"/></svg>
<div style="left:1279px;top:992px;width:83px;height:16px;background:linear-gradient(#7a7a7a,#606060);border:1px solid #333;border-top-color:#8a8a8a;border-radius:8px;"></div>
<span class="t" style="left:1308px;top:993px;color:#e2e2e2;">Apply</span>
</body></html>
